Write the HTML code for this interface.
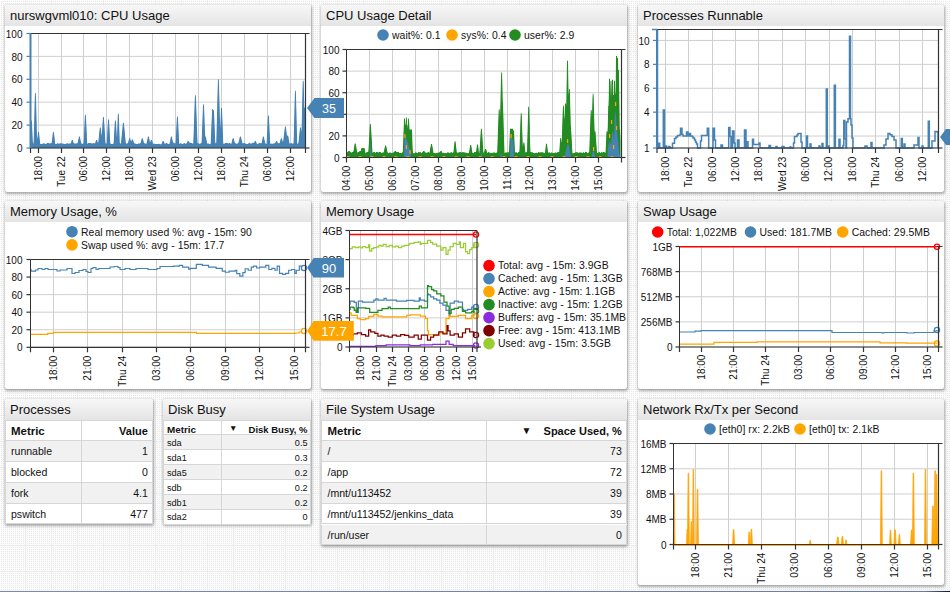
<!DOCTYPE html><html><head><meta charset="utf-8"><style>
*{margin:0;padding:0;box-sizing:border-box}
html,body{width:950px;height:592px;overflow:hidden}
body{font-family:"Liberation Sans",sans-serif;position:relative;background-color:#fbfbfb;
background-image:linear-gradient(90deg,#ececec 1px,transparent 1px),linear-gradient(#ececec 1px,transparent 1px),linear-gradient(90deg,transparent 1px,#fcfcfc 1px),linear-gradient(#e8e8e8 1px,transparent 1px);
background-size:26px 26px,26px 26px,2px 2px,2px 2px;background-position:25px 0,0 25px,1px 1px,1px 1px}
.panel{position:absolute;background:#fff;border-radius:2px;overflow:hidden;box-shadow:0 0 1.5px rgba(0,0,0,0.2),0.5px 1.5px 3px rgba(0,0,0,0.3)}
.hdr{height:21px;background:linear-gradient(#f7f7f7,#e4e4e4);font-size:13px;line-height:20px;padding-left:5px;padding-top:1px;color:#111;white-space:nowrap}
svg{position:absolute;overflow:visible}
svg text{font-family:"Liberation Sans",sans-serif}
.bot{position:absolute;left:0;top:590px;width:950px;height:2px;background:linear-gradient(#f4f4f4 1px,transparent 1px),linear-gradient(90deg,#7a8ea8 0,#6b7f9c 925px,#0b1522 950px)}
table{border-collapse:collapse;position:absolute;font-size:11px;color:#111}
td,th{border:1px solid #d4d4d4;white-space:nowrap}
</style></head><body>
<div class="panel" style="left:5px;top:5px;width:306px;height:187px"><div class="hdr">nurswgvml010: CPU Usage</div></div>
<div class="panel" style="left:321px;top:5px;width:306px;height:187px"><div class="hdr">CPU Usage Detail</div></div>
<div class="panel" style="left:638px;top:5px;width:306px;height:187px"><div class="hdr">Processes Runnable</div></div>
<div class="panel" style="left:5px;top:201px;width:306px;height:188px"><div class="hdr">Memory Usage, %</div></div>
<div class="panel" style="left:321px;top:201px;width:306px;height:188px"><div class="hdr">Memory Usage</div></div>
<div class="panel" style="left:638px;top:201px;width:306px;height:188px"><div class="hdr">Swap Usage</div></div>
<div class="panel" style="left:5px;top:399px;width:148px;height:125px"><div class="hdr">Processes</div></div>
<div class="panel" style="left:163px;top:399px;width:148px;height:125px"><div class="hdr">Disk Busy</div></div>
<div class="panel" style="left:321px;top:399px;width:306px;height:146px"><div class="hdr">File System Usage</div></div>
<div class="panel" style="left:638px;top:399px;width:306px;height:186px"><div class="hdr">Network Rx/Tx per Second</div></div>
<svg style="left:5px;top:25px" width="306" height="167" viewBox="5 25 306 167"><line x1="30.5" y1="148.0" x2="305.5" y2="148.0" stroke="#cfcfcf" stroke-width="1"/><line x1="30.5" y1="125.1" x2="305.5" y2="125.1" stroke="#cfcfcf" stroke-width="1"/><line x1="30.5" y1="102.2" x2="305.5" y2="102.2" stroke="#cfcfcf" stroke-width="1"/><line x1="30.5" y1="79.3" x2="305.5" y2="79.3" stroke="#cfcfcf" stroke-width="1"/><line x1="30.5" y1="56.400000000000006" x2="305.5" y2="56.400000000000006" stroke="#cfcfcf" stroke-width="1"/><line x1="30.5" y1="33.5" x2="305.5" y2="33.5" stroke="#cfcfcf" stroke-width="1"/><line x1="38.5" y1="33.5" x2="38.5" y2="148" stroke="#cfcfcf" stroke-width="1"/><line x1="61.5" y1="33.5" x2="61.5" y2="148" stroke="#cfcfcf" stroke-width="1"/><line x1="83.5" y1="33.5" x2="83.5" y2="148" stroke="#cfcfcf" stroke-width="1"/><line x1="106.5" y1="33.5" x2="106.5" y2="148" stroke="#cfcfcf" stroke-width="1"/><line x1="129.5" y1="33.5" x2="129.5" y2="148" stroke="#cfcfcf" stroke-width="1"/><line x1="152.5" y1="33.5" x2="152.5" y2="148" stroke="#cfcfcf" stroke-width="1"/><line x1="175.5" y1="33.5" x2="175.5" y2="148" stroke="#cfcfcf" stroke-width="1"/><line x1="198.5" y1="33.5" x2="198.5" y2="148" stroke="#cfcfcf" stroke-width="1"/><line x1="221.5" y1="33.5" x2="221.5" y2="148" stroke="#cfcfcf" stroke-width="1"/><line x1="244.5" y1="33.5" x2="244.5" y2="148" stroke="#cfcfcf" stroke-width="1"/><line x1="267.5" y1="33.5" x2="267.5" y2="148" stroke="#cfcfcf" stroke-width="1"/><line x1="290.5" y1="33.5" x2="290.5" y2="148" stroke="#cfcfcf" stroke-width="1"/><path d="M30.5,148 L30.5,33.5 L31.0,120.5 L31.2,120.5 L31.5,120.5 L31.8,120.5 L32.0,122.9 L32.2,128.7 L32.5,134.5 L32.8,140.4 L33.0,143.2 L33.2,143.4 L33.5,143.6 L33.8,137.6 L34.0,127.9 L34.2,118.2 L34.5,108.5 L34.8,98.9 L35.0,93.0 L35.2,93.0 L35.5,93.0 L35.8,93.0 L36.0,96.9 L36.2,106.6 L36.5,116.3 L36.8,126.0 L37.0,135.7 L37.2,139.3 L37.5,136.9 L37.8,134.4 L38.0,132.0 L38.2,132.0 L38.5,132.0 L38.8,132.0 L39.0,132.0 L39.2,134.4 L39.5,136.9 L39.8,139.3 L40.0,141.8 L40.2,143.7 L40.5,143.8 L40.8,144.0 L41.0,144.1 L41.2,144.1 L41.5,144.1 L41.8,144.1 L42.0,144.1 L42.2,143.9 L42.5,143.8 L42.8,143.7 L43.0,143.5 L43.2,143.4 L43.5,143.2 L43.8,143.1 L44.0,142.9 L44.2,143.2 L44.5,143.5 L44.8,143.7 L45.0,144.0 L45.2,144.0 L45.5,143.9 L45.8,143.9 L46.0,143.9 L46.2,143.7 L46.5,143.5 L46.8,143.4 L47.0,143.2 L47.2,143.1 L47.5,143.0 L47.8,142.8 L48.0,142.7 L48.2,142.9 L48.5,143.0 L48.8,143.1 L49.0,143.3 L49.2,143.4 L49.5,143.4 L49.8,143.5 L50.0,143.6 L50.2,143.4 L50.5,143.1 L50.8,142.9 L51.0,142.7 L51.2,143.0 L51.5,143.4 L51.8,142.1 L52.0,139.9 L52.2,137.7 L52.5,135.5 L52.8,133.3 L53.0,132.0 L53.2,132.0 L53.5,132.0 L53.8,132.0 L54.0,132.9 L54.2,135.1 L54.5,137.3 L54.8,139.5 L55.0,141.7 L55.2,144.0 L55.5,144.0 L55.8,144.0 L56.0,144.0 L56.2,144.0 L56.5,143.9 L56.8,143.8 L57.0,143.7 L57.2,143.5 L57.5,143.3 L57.8,143.1 L58.0,142.9 L58.2,143.2 L58.5,143.4 L58.8,143.7 L59.0,143.9 L59.2,143.8 L59.5,143.6 L59.8,143.4 L60.0,143.3 L60.2,143.3 L60.5,143.2 L60.8,143.2 L61.0,143.2 L61.2,143.3 L61.5,143.4 L61.8,143.5 L62.0,143.6 L62.2,143.6 L62.5,143.5 L62.8,143.4 L63.0,143.3 L63.2,143.5 L63.5,143.7 L63.8,143.9 L64.0,144.1 L64.2,144.1 L64.5,144.1 L64.8,144.1 L65.0,144.1 L65.2,144.1 L65.5,144.0 L65.8,144.0 L66.0,143.9 L66.2,143.7 L66.5,143.5 L66.8,143.3 L67.0,143.1 L67.2,143.2 L67.5,143.3 L67.8,143.4 L68.0,143.5 L68.2,143.6 L68.5,143.6 L68.8,143.7 L69.0,143.7 L69.2,143.6 L69.5,143.5 L69.8,143.4 L70.0,143.3 L70.2,143.3 L70.5,143.4 L70.8,143.4 L71.0,142.8 L71.2,141.9 L71.5,141.0 L71.8,140.2 L72.0,140.0 L72.2,140.0 L72.5,140.0 L72.8,140.0 L73.0,140.7 L73.2,141.6 L73.5,142.4 L73.8,143.1 L74.0,143.1 L74.2,143.3 L74.5,143.5 L74.8,143.6 L75.0,143.8 L75.2,143.7 L75.5,143.6 L75.8,143.4 L76.0,143.3 L76.2,143.3 L76.5,143.3 L76.8,143.4 L77.0,143.4 L77.2,143.2 L77.5,143.1 L77.8,142.6 L78.0,141.3 L78.2,140.0 L78.5,138.7 L78.8,137.3 L79.0,136.6 L79.2,136.6 L79.5,136.6 L79.8,136.6 L80.0,137.1 L80.2,138.4 L80.5,139.7 L80.8,141.0 L81.0,142.4 L81.2,143.0 L81.5,143.3 L81.8,143.7 L82.0,144.0 L82.2,143.9 L82.5,143.8 L82.8,143.7 L83.0,143.6 L83.2,143.4 L83.5,143.3 L83.8,140.1 L84.0,134.6 L84.2,129.1 L84.5,123.6 L84.8,118.1 L85.0,114.8 L85.2,114.8 L85.5,114.8 L85.8,114.8 L86.0,117.0 L86.2,122.5 L86.5,128.0 L86.8,133.5 L87.0,139.0 L87.2,143.9 L87.5,143.7 L87.8,143.4 L88.0,143.2 L88.2,143.1 L88.5,143.1 L88.8,143.0 L89.0,143.0 L89.2,143.1 L89.5,143.1 L89.8,143.2 L90.0,143.3 L90.2,143.2 L90.5,143.1 L90.8,142.9 L91.0,142.8 L91.2,143.0 L91.5,143.3 L91.8,143.5 L92.0,143.7 L92.2,143.6 L92.5,143.4 L92.8,143.3 L93.0,143.1 L93.2,143.1 L93.5,143.2 L93.8,143.2 L94.0,143.3 L94.2,143.3 L94.5,143.3 L94.8,143.3 L95.0,143.3 L95.2,143.0 L95.5,142.1 L95.8,141.2 L96.0,140.3 L96.2,140.0 L96.5,140.0 L96.8,140.0 L97.0,140.0 L97.2,140.5 L97.5,141.4 L97.8,142.3 L98.0,142.7 L98.2,142.7 L98.5,140.3 L98.8,137.8 L99.0,135.3 L99.2,132.8 L99.5,130.4 L99.8,127.9 L100.0,127.4 L100.2,127.4 L100.5,127.4 L100.8,127.4 L101.0,129.4 L101.2,131.8 L101.5,134.3 L101.8,135.8 L102.0,131.7 L102.2,127.7 L102.5,123.6 L102.8,119.5 L103.0,117.1 L103.2,117.1 L103.5,117.1 L103.8,117.1 L104.0,118.7 L104.2,122.8 L104.5,126.8 L104.8,130.9 L105.0,135.0 L105.2,139.0 L105.5,143.1 L105.8,143.5 L106.0,143.8 L106.2,143.7 L106.5,143.7 L106.8,142.5 L107.0,137.9 L107.2,133.2 L107.5,128.6 L107.8,124.0 L108.0,119.4 L108.2,119.4 L108.5,119.4 L108.8,119.4 L109.0,119.4 L109.2,124.0 L109.5,128.6 L109.8,133.2 L110.0,137.9 L110.2,142.5 L110.5,143.7 L110.8,143.8 L111.0,144.0 L111.2,144.0 L111.5,144.0 L111.8,144.0 L112.0,144.0 L112.2,144.1 L112.5,144.1 L112.8,144.1 L113.0,144.1 L113.2,143.8 L113.5,143.6 L113.8,140.8 L114.0,136.4 L114.2,132.0 L114.5,127.6 L114.8,123.2 L115.0,120.5 L115.2,120.5 L115.5,120.5 L115.8,120.5 L116.0,122.3 L116.2,126.7 L116.5,131.1 L116.8,135.5 L117.0,138.0 L117.2,130.4 L117.5,122.8 L117.8,115.2 L118.0,113.7 L118.2,113.7 L118.5,113.7 L118.8,113.7 L119.0,119.7 L119.2,127.3 L119.5,134.9 L119.8,142.5 L120.0,143.5 L120.2,143.5 L120.5,143.4 L120.8,143.4 L121.0,142.9 L121.2,140.2 L121.5,137.6 L121.8,135.0 L122.0,132.3 L122.2,129.7 L122.5,127.0 L122.8,124.4 L123.0,122.8 L123.2,122.8 L123.5,122.8 L123.8,122.8 L124.0,123.9 L124.2,126.5 L124.5,129.2 L124.8,131.8 L125.0,134.4 L125.2,137.1 L125.5,139.7 L125.8,142.4 L126.0,143.6 L126.2,143.6 L126.5,143.6 L126.8,143.6 L127.0,143.6 L127.2,143.4 L127.5,143.2 L127.8,143.0 L128.0,142.8 L128.2,142.0 L128.5,141.0 L128.8,140.1 L129.0,139.1 L129.2,138.3 L129.5,138.3 L129.8,138.3 L130.0,138.3 L130.2,138.5 L130.5,139.5 L130.8,140.4 L131.0,141.4 L131.2,141.4 L131.5,140.6 L131.8,139.9 L132.0,139.4 L132.2,139.4 L132.5,139.4 L132.8,139.4 L133.0,139.7 L133.2,140.5 L133.5,141.3 L133.8,142.0 L134.0,142.8 L134.2,143.4 L134.5,143.4 L134.8,143.3 L135.0,143.3 L135.2,143.4 L135.5,143.5 L135.8,143.7 L136.0,143.8 L136.2,143.9 L136.5,144.0 L136.8,144.1 L137.0,144.2 L137.2,144.0 L137.5,143.9 L137.8,143.7 L138.0,143.5 L138.2,143.6 L138.5,143.6 L138.8,143.6 L139.0,143.6 L139.2,143.6 L139.5,143.5 L139.8,143.4 L140.0,143.3 L140.2,143.2 L140.5,143.0 L140.8,142.4 L141.0,141.4 L141.2,140.4 L141.5,139.5 L141.8,138.5 L142.0,138.3 L142.2,138.3 L142.5,138.3 L142.8,138.3 L143.0,139.1 L143.2,140.1 L143.5,141.0 L143.8,142.0 L144.0,143.0 L144.2,143.2 L144.5,143.2 L144.8,143.2 L145.0,143.1 L145.2,143.4 L145.5,143.6 L145.8,143.9 L146.0,144.1 L146.2,143.8 L146.5,143.5 L146.8,142.6 L147.0,141.3 L147.2,140.0 L147.5,138.7 L147.8,137.3 L148.0,136.6 L148.2,136.6 L148.5,136.6 L148.8,136.6 L149.0,137.1 L149.2,138.4 L149.5,139.7 L149.8,141.0 L150.0,142.4 L150.2,142.3 L150.5,141.4 L150.8,140.5 L151.0,140.0 L151.2,140.0 L151.5,140.0 L151.8,140.0 L152.0,140.3 L152.2,141.2 L152.5,142.1 L152.8,143.0 L153.0,144.1 L153.2,143.8 L153.5,143.6 L153.8,143.4 L154.0,143.2 L154.2,143.4 L154.5,143.7 L154.8,143.9 L155.0,144.1 L155.2,144.1 L155.5,144.1 L155.8,144.1 L156.0,144.1 L156.2,144.1 L156.5,144.0 L156.8,143.9 L157.0,143.9 L157.2,143.9 L157.5,143.9 L157.8,143.9 L158.0,144.0 L158.2,143.9 L158.5,143.8 L158.8,143.7 L159.0,143.7 L159.2,143.8 L159.5,143.9 L159.8,144.0 L160.0,144.1 L160.2,144.2 L160.5,144.2 L160.8,144.2 L161.0,144.2 L161.2,144.2 L161.5,144.1 L161.8,143.3 L162.0,142.8 L162.2,142.2 L162.5,141.6 L162.8,141.1 L163.0,141.1 L163.2,141.1 L163.5,141.1 L163.8,141.2 L164.0,141.8 L164.2,142.4 L164.5,143.0 L164.8,144.0 L165.0,144.2 L165.2,143.8 L165.5,143.5 L165.8,143.2 L166.0,142.8 L166.2,142.9 L166.5,143.0 L166.8,143.1 L167.0,143.2 L167.2,143.4 L167.5,143.6 L167.8,143.8 L168.0,144.0 L168.2,143.9 L168.5,143.9 L168.8,143.9 L169.0,143.8 L169.2,143.8 L169.5,143.7 L169.8,142.6 L170.0,141.3 L170.2,140.0 L170.5,138.7 L170.8,137.3 L171.0,136.6 L171.2,136.6 L171.5,136.6 L171.8,136.6 L172.0,137.1 L172.2,138.4 L172.5,139.7 L172.8,141.0 L173.0,142.4 L173.2,142.8 L173.5,142.7 L173.8,142.7 L174.0,142.6 L174.2,142.8 L174.5,143.1 L174.8,143.3 L175.0,143.5 L175.2,143.5 L175.5,143.5 L175.8,140.3 L176.0,135.1 L176.2,130.0 L176.5,124.8 L176.8,119.6 L177.0,116.5 L177.2,116.5 L177.5,116.5 L177.8,116.5 L178.0,118.6 L178.2,123.8 L178.5,128.9 L178.8,134.1 L179.0,139.3 L179.2,143.7 L179.5,143.7 L179.8,143.8 L180.0,143.8 L180.2,143.6 L180.5,143.3 L180.8,143.1 L181.0,142.9 L181.2,143.2 L181.5,143.4 L181.8,143.7 L182.0,144.0 L182.2,144.0 L182.5,144.1 L182.8,144.1 L183.0,144.2 L183.2,143.8 L183.5,143.4 L183.8,143.1 L184.0,142.7 L184.2,142.9 L184.5,143.0 L184.8,143.2 L185.0,143.4 L185.2,143.5 L185.5,143.7 L185.8,143.8 L186.0,144.0 L186.2,143.8 L186.5,143.2 L186.8,142.8 L187.0,142.4 L187.2,141.9 L187.5,141.5 L187.8,141.1 L188.0,141.1 L188.2,141.1 L188.5,141.1 L188.8,141.2 L189.0,141.7 L189.2,142.1 L189.5,142.5 L189.8,142.8 L190.0,142.7 L190.2,142.7 L190.5,142.7 L190.8,142.8 L191.0,142.8 L191.2,142.9 L191.5,143.0 L191.8,143.0 L192.0,143.1 L192.2,143.3 L192.5,143.5 L192.8,143.6 L193.0,143.8 L193.2,143.8 L193.5,136.9 L193.8,129.5 L194.0,122.0 L194.2,114.6 L194.5,107.2 L194.8,99.8 L195.0,95.3 L195.2,95.3 L195.5,95.3 L195.8,95.3 L196.0,98.3 L196.2,105.7 L196.5,113.1 L196.8,120.6 L197.0,128.0 L197.2,135.4 L197.5,142.8 L197.8,143.1 L198.0,143.0 L198.2,143.2 L198.5,143.3 L198.8,143.5 L199.0,143.7 L199.2,143.7 L199.5,143.8 L199.8,143.8 L200.0,143.9 L200.2,143.6 L200.5,143.4 L200.8,143.2 L201.0,142.9 L201.2,142.9 L201.5,142.8 L201.8,138.5 L202.0,131.7 L202.2,124.9 L202.5,118.1 L202.8,111.3 L203.0,104.5 L203.2,104.5 L203.5,104.5 L203.8,104.5 L204.0,104.5 L204.2,111.3 L204.5,118.1 L204.8,124.9 L205.0,131.7 L205.2,136.6 L205.5,136.6 L205.8,136.6 L206.0,137.1 L206.2,138.4 L206.5,139.7 L206.8,141.0 L207.0,142.4 L207.2,143.7 L207.5,143.6 L207.8,143.5 L208.0,143.4 L208.2,143.5 L208.5,143.5 L208.8,143.6 L209.0,143.7 L209.2,143.8 L209.5,143.9 L209.8,144.0 L210.0,144.2 L210.2,144.2 L210.5,144.2 L210.8,141.5 L211.0,135.5 L211.2,129.5 L211.5,123.5 L211.8,117.5 L212.0,111.5 L212.2,109.1 L212.5,109.1 L212.8,109.1 L213.0,109.1 L213.2,110.2 L213.5,110.2 L213.8,110.2 L214.0,110.2 L214.2,116.6 L214.5,123.0 L214.8,129.4 L215.0,135.8 L215.2,142.1 L215.5,143.1 L215.8,143.3 L216.0,143.5 L216.2,143.3 L216.5,134.7 L216.8,124.8 L217.0,114.9 L217.2,105.0 L217.5,95.1 L217.8,85.2 L218.0,79.3 L218.2,79.3 L218.5,79.3 L218.8,79.3 L219.0,83.3 L219.2,93.2 L219.5,103.0 L219.8,112.9 L220.0,122.8 L220.2,128.4 L220.5,121.6 L220.8,114.8 L221.0,107.9 L221.2,107.9 L221.5,107.9 L221.8,107.9 L222.0,107.9 L222.2,114.8 L222.5,121.6 L222.8,128.4 L223.0,135.2 L223.2,142.1 L223.5,143.9 L223.8,143.9 L224.0,143.9 L224.2,143.7 L224.5,143.6 L224.8,143.4 L225.0,143.2 L225.2,143.1 L225.5,143.0 L225.8,142.9 L226.0,142.8 L226.2,142.8 L226.5,142.8 L226.8,142.9 L227.0,142.9 L227.2,143.0 L227.5,143.2 L227.8,143.3 L228.0,143.5 L228.2,143.4 L228.5,143.3 L228.8,143.2 L229.0,143.2 L229.2,143.1 L229.5,143.1 L229.8,143.0 L230.0,142.9 L230.2,143.2 L230.5,143.5 L230.8,143.8 L231.0,144.1 L231.2,143.9 L231.5,143.0 L231.8,142.0 L232.0,141.0 L232.2,140.1 L232.5,139.1 L232.8,138.3 L233.0,138.3 L233.2,138.3 L233.5,138.3 L233.8,138.5 L234.0,139.5 L234.2,140.4 L234.5,141.4 L234.8,142.4 L235.0,143.0 L235.2,143.1 L235.5,143.2 L235.8,143.3 L236.0,143.5 L236.2,143.6 L236.5,143.7 L236.8,143.8 L237.0,143.9 L237.2,143.7 L237.5,143.4 L237.8,143.2 L238.0,143.0 L238.2,143.1 L238.5,142.5 L238.8,141.4 L239.0,140.4 L239.2,139.3 L239.5,138.2 L239.8,137.2 L240.0,136.6 L240.2,136.6 L240.5,136.6 L240.8,136.6 L241.0,137.0 L241.2,138.0 L241.5,139.1 L241.8,140.2 L242.0,141.2 L242.2,142.3 L242.5,143.3 L242.8,143.6 L243.0,143.6 L243.2,143.4 L243.5,143.1 L243.8,142.9 L244.0,142.7 L244.2,142.8 L244.5,142.9 L244.8,143.0 L245.0,143.1 L245.2,143.3 L245.5,143.5 L245.8,143.7 L246.0,143.9 L246.2,144.0 L246.5,144.0 L246.8,144.0 L247.0,144.0 L247.2,144.0 L247.5,144.0 L247.8,144.0 L248.0,144.0 L248.2,143.7 L248.5,143.4 L248.8,143.1 L249.0,142.8 L249.2,142.8 L249.5,142.8 L249.8,142.9 L250.0,142.9 L250.2,143.2 L250.5,143.5 L250.8,143.7 L251.0,144.0 L251.2,143.7 L251.5,143.4 L251.8,143.2 L252.0,142.9 L252.2,142.8 L252.5,142.8 L252.8,142.7 L253.0,142.7 L253.2,142.8 L253.5,142.9 L253.8,143.0 L254.0,143.0 L254.2,142.4 L254.5,141.8 L254.8,141.2 L255.0,141.1 L255.2,141.1 L255.5,141.1 L255.8,141.1 L256.0,141.6 L256.2,142.2 L256.5,142.8 L256.8,143.3 L257.0,144.0 L257.2,144.1 L257.5,144.1 L257.8,144.2 L258.0,144.2 L258.2,143.8 L258.5,143.4 L258.8,143.0 L259.0,142.7 L259.2,142.8 L259.5,142.9 L259.8,143.1 L260.0,143.2 L260.2,143.2 L260.5,143.3 L260.8,143.3 L261.0,143.4 L261.2,143.2 L261.5,143.1 L261.8,142.6 L262.0,141.3 L262.2,140.0 L262.5,138.7 L262.8,137.3 L263.0,136.6 L263.2,136.6 L263.5,136.6 L263.8,136.6 L264.0,137.1 L264.2,138.4 L264.5,139.7 L264.8,141.0 L265.0,142.4 L265.2,143.1 L265.5,143.4 L265.8,143.6 L266.0,143.9 L266.2,143.9 L266.5,143.9 L266.8,140.2 L267.0,134.8 L267.2,129.4 L267.5,124.0 L267.8,118.6 L268.0,115.4 L268.2,115.4 L268.5,115.4 L268.8,115.4 L269.0,117.5 L269.2,122.9 L269.5,128.3 L269.8,133.7 L270.0,139.1 L270.2,143.4 L270.5,143.5 L270.8,143.7 L271.0,143.8 L271.2,143.7 L271.5,143.7 L271.8,143.6 L272.0,143.5 L272.2,143.7 L272.5,143.8 L272.8,143.9 L273.0,144.0 L273.2,143.7 L273.5,143.4 L273.8,143.1 L274.0,142.8 L274.2,143.0 L274.5,143.2 L274.8,143.4 L275.0,143.7 L275.2,142.9 L275.5,142.3 L275.8,141.7 L276.0,141.1 L276.2,141.1 L276.5,141.1 L276.8,141.1 L277.0,141.1 L277.2,141.7 L277.5,142.3 L277.8,142.9 L278.0,142.8 L278.2,143.0 L278.5,143.2 L278.8,143.4 L279.0,143.5 L279.2,143.3 L279.5,143.1 L279.8,142.8 L280.0,141.8 L280.2,140.8 L280.5,139.9 L280.8,138.9 L281.0,138.3 L281.2,138.3 L281.5,138.3 L281.8,138.3 L282.0,138.7 L282.2,139.7 L282.5,140.6 L282.8,141.6 L283.0,142.6 L283.2,140.8 L283.5,138.7 L283.8,136.5 L284.0,134.4 L284.2,132.2 L284.5,130.0 L284.8,127.9 L285.0,126.6 L285.2,126.6 L285.5,126.6 L285.8,126.6 L286.0,127.5 L286.2,129.6 L286.5,131.8 L286.8,133.9 L287.0,136.1 L287.2,135.4 L287.5,135.4 L287.8,135.4 L288.0,135.4 L288.2,135.7 L288.5,137.3 L288.8,138.8 L289.0,140.3 L289.2,141.9 L289.5,143.7 L289.8,143.6 L290.0,143.5 L290.2,143.4 L290.5,143.3 L290.8,143.2 L291.0,143.1 L291.2,143.1 L291.5,143.2 L291.8,143.3 L292.0,143.3 L292.2,143.4 L292.5,143.5 L292.8,143.6 L293.0,143.7 L293.2,143.6 L293.5,143.5 L293.8,137.3 L294.0,127.2 L294.2,117.1 L294.5,107.0 L294.8,96.8 L295.0,90.8 L295.2,90.8 L295.5,90.8 L295.8,90.8 L296.0,94.8 L296.2,104.9 L296.5,115.1 L296.8,125.2 L297.0,135.3 L297.2,143.9 L297.5,143.7 L297.8,143.5 L298.0,143.3 L298.2,143.4 L298.5,142.2 L298.8,139.8 L299.0,137.3 L299.2,134.8 L299.5,132.3 L299.8,129.9 L300.0,127.4 L300.2,127.4 L300.5,127.4 L300.8,127.4 L301.0,127.4 L301.2,129.9 L301.5,132.3 L301.8,122.4 L302.0,111.4 L302.2,100.5 L302.5,89.5 L302.8,80.8 L303.0,80.8 L303.2,80.8 L303.5,80.8 L303.8,83.0 L304.0,93.9 L304.2,104.9 L304.5,107.9 L304.8,107.9 L305.0,107.9 L305.2,107.9 L305.5,107.9 L305.5,148 Z" fill="#4682b4"/><line x1="30.5" y1="33.5" x2="309.5" y2="33.5" stroke="#333333" stroke-width="1.2"/><line x1="305.5" y1="33.5" x2="305.5" y2="148" stroke="#333333" stroke-width="1.2"/><line x1="305.5" y1="148" x2="309.5" y2="148" stroke="#333333" stroke-width="1.2"/><line x1="30.5" y1="148" x2="305.5" y2="148" stroke="#333333" stroke-width="1.2"/><line x1="30.5" y1="33.5" x2="30.5" y2="148" stroke="#4682b4" stroke-width="2"/><line x1="26.5" y1="148.0" x2="30.5" y2="148.0" stroke="#4682b4" stroke-width="1.2"/><text x="22.5" y="152.1" font-size="10" text-anchor="end" fill="#111">0</text><line x1="26.5" y1="125.1" x2="30.5" y2="125.1" stroke="#4682b4" stroke-width="1.2"/><text x="22.5" y="129.2" font-size="10" text-anchor="end" fill="#111">20</text><line x1="26.5" y1="102.2" x2="30.5" y2="102.2" stroke="#4682b4" stroke-width="1.2"/><text x="22.5" y="106.3" font-size="10" text-anchor="end" fill="#111">40</text><line x1="26.5" y1="79.3" x2="30.5" y2="79.3" stroke="#4682b4" stroke-width="1.2"/><text x="22.5" y="83.39999999999999" font-size="10" text-anchor="end" fill="#111">60</text><line x1="26.5" y1="56.400000000000006" x2="30.5" y2="56.400000000000006" stroke="#4682b4" stroke-width="1.2"/><text x="22.5" y="60.50000000000001" font-size="10" text-anchor="end" fill="#111">80</text><line x1="26.5" y1="33.5" x2="30.5" y2="33.5" stroke="#4682b4" stroke-width="1.2"/><text x="22.5" y="37.6" font-size="10" text-anchor="end" fill="#111">100</text><line x1="30.5" y1="148" x2="30.5" y2="153" stroke="#333333" stroke-width="1.2"/><line x1="38.5" y1="148" x2="38.5" y2="153" stroke="#333333" stroke-width="1.2"/><line x1="61.5" y1="148" x2="61.5" y2="153" stroke="#333333" stroke-width="1.2"/><line x1="83.5" y1="148" x2="83.5" y2="153" stroke="#333333" stroke-width="1.2"/><line x1="106.5" y1="148" x2="106.5" y2="153" stroke="#333333" stroke-width="1.2"/><line x1="129.5" y1="148" x2="129.5" y2="153" stroke="#333333" stroke-width="1.2"/><line x1="152.5" y1="148" x2="152.5" y2="153" stroke="#333333" stroke-width="1.2"/><line x1="175.5" y1="148" x2="175.5" y2="153" stroke="#333333" stroke-width="1.2"/><line x1="198.5" y1="148" x2="198.5" y2="153" stroke="#333333" stroke-width="1.2"/><line x1="221.5" y1="148" x2="221.5" y2="153" stroke="#333333" stroke-width="1.2"/><line x1="244.5" y1="148" x2="244.5" y2="153" stroke="#333333" stroke-width="1.2"/><line x1="267.5" y1="148" x2="267.5" y2="153" stroke="#333333" stroke-width="1.2"/><line x1="290.5" y1="148" x2="290.5" y2="153" stroke="#333333" stroke-width="1.2"/><line x1="305.5" y1="148" x2="305.5" y2="153" stroke="#333333" stroke-width="1.2"/><text transform="translate(41.9,156.1) rotate(-90)" font-size="10" text-anchor="end" fill="#111">18:00</text><text transform="translate(64.9,156.1) rotate(-90)" font-size="10" text-anchor="end" fill="#111">Tue 22</text><text transform="translate(86.9,156.1) rotate(-90)" font-size="10" text-anchor="end" fill="#111">06:00</text><text transform="translate(109.9,156.1) rotate(-90)" font-size="10" text-anchor="end" fill="#111">12:00</text><text transform="translate(132.9,156.1) rotate(-90)" font-size="10" text-anchor="end" fill="#111">18:00</text><text transform="translate(155.9,156.1) rotate(-90)" font-size="10" text-anchor="end" fill="#111">Wed 23</text><text transform="translate(178.9,156.1) rotate(-90)" font-size="10" text-anchor="end" fill="#111">06:00</text><text transform="translate(201.9,156.1) rotate(-90)" font-size="10" text-anchor="end" fill="#111">12:00</text><text transform="translate(224.9,156.1) rotate(-90)" font-size="10" text-anchor="end" fill="#111">18:00</text><text transform="translate(247.9,156.1) rotate(-90)" font-size="10" text-anchor="end" fill="#111">Thu 24</text><text transform="translate(270.9,156.1) rotate(-90)" font-size="10" text-anchor="end" fill="#111">06:00</text><text transform="translate(293.9,156.1) rotate(-90)" font-size="10" text-anchor="end" fill="#111">12:00</text></svg>
<svg style="left:321px;top:25px" width="306" height="167" viewBox="321 25 306 167"><circle cx="383" cy="35" r="5.8" fill="#4682b4"/><text x="392" y="38.8" font-size="10.4" fill="#111" letter-spacing="0.07">wait%: 0.1</text><circle cx="452" cy="35" r="5.8" fill="#ffa500"/><text x="461" y="38.8" font-size="10.4" fill="#111" letter-spacing="0.07">sys%: 0.4</text><circle cx="515" cy="35" r="5.8" fill="#228b22"/><text x="524" y="38.8" font-size="10.4" fill="#111" letter-spacing="0.07">user%: 2.9</text><line x1="346.5" y1="157.5" x2="621.5" y2="157.5" stroke="#cfcfcf" stroke-width="1"/><line x1="346.5" y1="135.9" x2="621.5" y2="135.9" stroke="#cfcfcf" stroke-width="1"/><line x1="346.5" y1="114.3" x2="621.5" y2="114.3" stroke="#cfcfcf" stroke-width="1"/><line x1="346.5" y1="92.7" x2="621.5" y2="92.7" stroke="#cfcfcf" stroke-width="1"/><line x1="346.5" y1="71.1" x2="621.5" y2="71.1" stroke="#cfcfcf" stroke-width="1"/><line x1="346.5" y1="49.5" x2="621.5" y2="49.5" stroke="#cfcfcf" stroke-width="1"/><line x1="369.5" y1="49.5" x2="369.5" y2="157.5" stroke="#cfcfcf" stroke-width="1"/><line x1="392.5" y1="49.5" x2="392.5" y2="157.5" stroke="#cfcfcf" stroke-width="1"/><line x1="415.5" y1="49.5" x2="415.5" y2="157.5" stroke="#cfcfcf" stroke-width="1"/><line x1="438.5" y1="49.5" x2="438.5" y2="157.5" stroke="#cfcfcf" stroke-width="1"/><line x1="461.5" y1="49.5" x2="461.5" y2="157.5" stroke="#cfcfcf" stroke-width="1"/><line x1="484.5" y1="49.5" x2="484.5" y2="157.5" stroke="#cfcfcf" stroke-width="1"/><line x1="507.5" y1="49.5" x2="507.5" y2="157.5" stroke="#cfcfcf" stroke-width="1"/><line x1="529.5" y1="49.5" x2="529.5" y2="157.5" stroke="#cfcfcf" stroke-width="1"/><line x1="552.5" y1="49.5" x2="552.5" y2="157.5" stroke="#cfcfcf" stroke-width="1"/><line x1="575.5" y1="49.5" x2="575.5" y2="157.5" stroke="#cfcfcf" stroke-width="1"/><line x1="598.5" y1="49.5" x2="598.5" y2="157.5" stroke="#cfcfcf" stroke-width="1"/><path d="M346.5,157.5 L346.5,152.5 L346.8,152.5 L347.0,152.5 L347.2,152.3 L347.5,152.0 L347.8,151.8 L348.0,151.5 L348.2,151.3 L348.5,151.0 L348.8,151.0 L349.0,151.0 L349.2,151.0 L349.5,151.0 L349.8,151.3 L350.0,151.5 L350.2,151.8 L350.5,152.0 L350.8,152.3 L351.0,152.5 L351.2,152.5 L351.5,152.6 L351.8,152.4 L352.0,152.2 L352.2,152.0 L352.5,151.9 L352.8,152.0 L353.0,152.0 L353.2,152.1 L353.5,150.7 L353.8,149.2 L354.0,147.7 L354.2,146.2 L354.5,144.7 L354.8,143.5 L355.0,143.5 L355.2,143.5 L355.5,143.5 L355.8,143.8 L356.0,145.3 L356.2,146.8 L356.5,148.3 L356.8,149.8 L357.0,151.3 L357.2,152.6 L357.5,152.4 L357.8,152.3 L358.0,152.2 L358.2,152.0 L358.5,151.9 L358.8,151.9 L359.0,151.7 L359.2,151.5 L359.5,151.2 L359.8,151.0 L360.0,151.0 L360.2,151.0 L360.5,151.0 L360.8,151.1 L361.0,150.3 L361.2,149.2 L361.5,148.1 L361.8,148.1 L362.0,148.1 L362.2,148.1 L362.5,148.1 L362.8,148.1 L363.0,148.1 L363.2,148.1 L363.5,148.1 L363.8,148.1 L364.0,148.1 L364.2,148.1 L364.5,148.1 L364.8,149.2 L365.0,150.3 L365.2,151.4 L365.5,153.2 L365.8,153.0 L366.0,152.7 L366.2,152.5 L366.5,152.3 L366.8,152.2 L367.0,152.2 L367.2,152.1 L367.5,152.1 L367.8,152.1 L368.0,152.0 L368.2,152.0 L368.5,149.0 L368.8,144.5 L369.0,140.1 L369.2,135.6 L369.5,131.1 L369.8,126.7 L370.0,124.0 L370.2,124.0 L370.5,124.0 L370.8,124.0 L371.0,125.8 L371.2,130.3 L371.5,134.7 L371.8,139.2 L372.0,143.6 L372.2,148.1 L372.5,153.1 L372.8,152.8 L373.0,152.5 L373.2,152.2 L373.5,152.0 L373.8,151.9 L374.0,151.9 L374.2,151.9 L374.5,151.8 L374.8,152.1 L375.0,152.4 L375.2,152.7 L375.5,153.0 L375.8,152.4 L376.0,152.3 L376.2,152.1 L376.5,151.8 L376.8,152.1 L377.0,152.1 L377.2,152.1 L377.5,152.1 L377.8,152.2 L378.0,152.3 L378.2,152.4 L378.5,152.6 L378.8,152.4 L379.0,152.2 L379.2,152.0 L379.5,151.8 L379.8,151.9 L380.0,151.9 L380.2,152.0 L380.5,152.0 L380.8,152.3 L381.0,152.5 L381.2,152.8 L381.5,153.0 L381.8,152.9 L382.0,152.8 L382.2,152.7 L382.5,152.6 L382.8,152.6 L383.0,152.6 L383.2,152.5 L383.5,152.5 L383.8,151.8 L384.0,150.7 L384.2,149.5 L384.5,148.4 L384.8,147.2 L385.0,146.1 L385.2,145.6 L385.5,145.6 L385.8,145.6 L386.0,145.6 L386.2,146.3 L386.5,147.5 L386.8,148.6 L387.0,149.8 L387.2,150.9 L387.5,152.1 L387.8,152.5 L388.0,152.7 L388.2,153.0 L388.5,153.3 L388.8,153.1 L389.0,152.9 L389.2,152.7 L389.5,152.5 L389.8,152.5 L390.0,152.5 L390.2,152.6 L390.5,152.6 L390.8,152.8 L391.0,152.9 L391.2,153.1 L391.5,153.3 L391.8,153.1 L392.0,153.0 L392.2,152.9 L392.5,152.8 L392.8,152.7 L393.0,152.6 L393.2,152.5 L393.5,152.3 L393.8,152.4 L394.0,152.2 L394.2,151.9 L394.5,151.5 L394.8,151.1 L395.0,151.0 L395.2,151.0 L395.5,151.0 L395.8,151.0 L396.0,151.3 L396.2,151.7 L396.5,151.8 L396.8,151.9 L397.0,151.9 L397.2,152.0 L397.5,152.1 L397.8,152.0 L398.0,152.0 L398.2,151.9 L398.5,151.8 L398.8,152.1 L399.0,152.5 L399.2,152.8 L399.5,153.1 L399.8,153.1 L400.0,153.0 L400.2,152.9 L400.5,152.9 L400.8,153.0 L401.0,153.1 L401.2,153.1 L401.5,153.2 L401.8,152.9 L402.0,152.7 L402.2,152.4 L402.5,152.1 L402.8,152.3 L403.0,146.9 L403.2,139.8 L403.5,132.8 L403.8,125.7 L404.0,118.6 L404.2,118.6 L404.5,118.6 L404.8,118.6 L405.0,118.6 L405.2,125.1 L405.5,125.1 L405.8,121.9 L406.0,117.5 L406.2,117.5 L406.5,117.5 L406.8,117.5 L407.0,120.5 L407.2,125.1 L407.5,125.1 L407.8,128.5 L408.0,121.4 L408.2,118.6 L408.5,118.6 L408.8,118.6 L409.0,118.6 L409.2,122.9 L409.5,129.4 L409.8,129.4 L410.0,129.4 L410.2,129.4 L410.5,129.4 L410.8,129.4 L411.0,129.4 L411.2,129.4 L411.5,129.4 L411.8,129.4 L412.0,129.4 L412.2,136.6 L412.5,143.9 L412.8,151.1 L413.0,152.7 L413.2,152.9 L413.5,153.2 L413.8,153.2 L414.0,153.2 L414.2,153.2 L414.5,153.2 L414.8,153.0 L415.0,152.7 L415.2,152.5 L415.5,152.2 L415.8,152.3 L416.0,152.4 L416.2,152.5 L416.5,152.6 L416.8,152.8 L417.0,152.9 L417.2,153.0 L417.5,153.2 L417.8,152.9 L418.0,152.5 L418.2,152.2 L418.5,151.9 L418.8,152.0 L419.0,152.1 L419.2,152.2 L419.5,152.3 L419.8,152.3 L420.0,152.2 L420.2,152.1 L420.5,152.1 L420.8,152.3 L421.0,152.6 L421.2,152.9 L421.5,153.2 L421.8,152.9 L422.0,152.6 L422.2,152.3 L422.5,152.0 L422.8,151.9 L423.0,151.5 L423.2,151.1 L423.5,151.0 L423.8,151.0 L424.0,151.0 L424.2,151.0 L424.5,151.3 L424.8,151.7 L425.0,152.1 L425.2,152.4 L425.5,152.6 L425.8,152.6 L426.0,152.7 L426.2,152.7 L426.5,152.8 L426.8,152.7 L427.0,152.6 L427.2,152.5 L427.5,152.5 L427.8,152.3 L428.0,152.2 L428.2,152.0 L428.5,151.9 L428.8,152.1 L429.0,152.4 L429.2,152.6 L429.5,152.9 L429.8,151.1 L430.0,149.7 L430.2,148.3 L430.5,146.9 L430.8,145.5 L431.0,144.1 L431.2,144.1 L431.5,144.1 L431.8,144.1 L432.0,144.1 L432.2,145.5 L432.5,146.9 L432.8,148.3 L433.0,149.7 L433.2,151.1 L433.5,153.1 L433.8,153.1 L434.0,153.1 L434.2,153.1 L434.5,153.0 L434.8,153.1 L435.0,153.1 L435.2,153.2 L435.5,153.2 L435.8,153.2 L436.0,153.1 L436.2,153.0 L436.5,153.0 L436.8,152.9 L437.0,152.9 L437.2,152.9 L437.5,152.8 L437.8,152.8 L438.0,152.8 L438.2,152.8 L438.5,152.8 L438.8,152.7 L439.0,152.5 L439.2,152.3 L439.5,152.1 L439.8,152.2 L440.0,151.8 L440.2,151.4 L440.5,151.0 L440.8,151.0 L441.0,151.0 L441.2,151.0 L441.5,151.0 L441.8,151.4 L442.0,151.8 L442.2,152.2 L442.5,153.0 L442.8,153.0 L443.0,152.9 L443.2,152.8 L443.5,152.8 L443.8,152.9 L444.0,153.0 L444.2,153.1 L444.5,153.3 L444.8,153.2 L445.0,153.1 L445.2,153.0 L445.5,152.9 L445.8,153.0 L446.0,153.1 L446.2,153.2 L446.5,153.3 L446.8,153.0 L447.0,152.7 L447.2,152.5 L447.5,152.2 L447.8,152.2 L448.0,152.3 L448.2,152.4 L448.5,152.5 L448.8,152.6 L449.0,152.7 L449.2,152.9 L449.5,153.0 L449.8,152.9 L450.0,152.8 L450.2,152.7 L450.5,152.6 L450.8,152.4 L451.0,152.2 L451.2,152.0 L451.5,151.9 L451.8,152.2 L452.0,152.5 L452.2,152.8 L452.5,153.1 L452.8,152.9 L453.0,152.6 L453.2,152.3 L453.5,151.6 L453.8,149.3 L454.0,146.9 L454.2,144.6 L454.5,142.2 L454.8,141.3 L455.0,141.3 L455.2,141.3 L455.5,141.3 L455.8,142.7 L456.0,145.0 L456.2,147.4 L456.5,149.7 L456.8,152.1 L457.0,152.4 L457.2,152.5 L457.5,152.7 L457.8,152.7 L458.0,152.6 L458.2,152.6 L458.5,152.5 L458.8,152.5 L459.0,152.4 L459.2,152.3 L459.5,152.2 L459.8,152.1 L460.0,152.0 L460.2,151.9 L460.5,151.8 L460.8,152.0 L461.0,152.3 L461.2,152.5 L461.5,152.8 L461.8,152.6 L462.0,152.4 L462.2,152.2 L462.5,152.0 L462.8,152.1 L463.0,152.1 L463.2,152.2 L463.5,152.2 L463.8,152.2 L464.0,152.3 L464.2,152.3 L464.5,152.3 L464.8,152.4 L465.0,152.5 L465.2,152.6 L465.5,152.7 L465.8,152.7 L466.0,152.7 L466.2,152.7 L466.5,152.8 L466.8,152.9 L467.0,153.0 L467.2,153.1 L467.5,153.2 L467.8,153.2 L468.0,153.1 L468.2,153.1 L468.5,153.1 L468.8,153.1 L469.0,152.5 L469.2,151.0 L469.5,149.4 L469.8,147.9 L470.0,146.3 L470.2,145.1 L470.5,145.1 L470.8,145.1 L471.0,145.1 L471.2,145.4 L471.5,146.9 L471.8,148.5 L472.0,150.0 L472.2,151.6 L472.5,153.0 L472.8,153.1 L473.0,153.1 L473.2,153.1 L473.5,153.2 L473.8,152.9 L474.0,152.6 L474.2,152.3 L474.5,152.0 L474.8,152.0 L475.0,152.0 L475.2,152.0 L475.5,152.0 L475.8,152.0 L476.0,152.1 L476.2,150.5 L476.5,148.5 L476.8,146.5 L477.0,144.5 L477.2,144.5 L477.5,144.5 L477.8,144.5 L478.0,144.5 L478.2,146.5 L478.5,148.5 L478.8,150.5 L479.0,152.9 L479.2,152.9 L479.5,150.9 L479.8,147.0 L480.0,143.0 L480.2,139.0 L480.5,135.0 L480.8,131.1 L481.0,128.7 L481.2,128.7 L481.5,128.7 L481.8,128.7 L482.0,130.3 L482.2,134.2 L482.5,138.2 L482.8,142.2 L483.0,146.2 L483.2,150.1 L483.5,152.9 L483.8,152.6 L484.0,152.4 L484.2,152.0 L484.5,151.1 L484.8,150.1 L485.0,149.2 L485.2,148.9 L485.5,148.9 L485.8,148.9 L486.0,148.9 L486.2,149.4 L486.5,150.3 L486.8,151.2 L487.0,152.2 L487.2,152.8 L487.5,152.9 L487.8,152.6 L488.0,152.4 L488.2,152.1 L488.5,151.8 L488.8,152.1 L489.0,152.3 L489.2,152.6 L489.5,152.8 L489.8,152.8 L490.0,152.8 L490.2,152.8 L490.5,152.7 L490.8,152.9 L491.0,153.0 L491.2,153.2 L491.5,153.3 L491.8,153.1 L492.0,153.0 L492.2,152.9 L492.5,152.7 L492.8,152.7 L493.0,152.6 L493.2,152.6 L493.5,152.6 L493.8,152.6 L494.0,152.5 L494.2,152.5 L494.5,152.5 L494.8,152.6 L495.0,152.8 L495.2,152.9 L495.5,153.0 L495.8,152.9 L496.0,152.8 L496.2,152.6 L496.5,152.5 L496.8,152.7 L497.0,152.9 L497.2,151.1 L497.5,143.9 L497.8,136.7 L498.0,129.4 L498.2,122.2 L498.5,115.0 L498.8,109.2 L499.0,109.2 L499.2,109.2 L499.5,109.2 L499.8,110.7 L500.0,117.9 L500.2,110.3 L500.5,99.2 L500.8,88.1 L501.0,77.0 L501.2,72.5 L501.5,72.5 L501.8,72.5 L502.0,72.5 L502.2,79.2 L502.5,90.3 L502.8,101.4 L503.0,103.5 L503.2,111.7 L503.5,119.8 L503.8,128.0 L504.0,136.2 L504.2,144.4 L504.5,152.9 L504.8,152.8 L505.0,152.7 L505.2,152.5 L505.5,152.4 L505.8,152.4 L506.0,152.4 L506.2,152.5 L506.5,152.5 L506.8,152.4 L507.0,152.3 L507.2,152.2 L507.5,152.2 L507.8,152.2 L508.0,152.2 L508.2,152.3 L508.5,152.3 L508.8,152.3 L509.0,152.2 L509.2,146.6 L509.5,140.6 L509.8,134.6 L510.0,128.7 L510.2,128.7 L510.5,128.7 L510.8,128.7 L511.0,128.7 L511.2,128.7 L511.5,128.7 L511.8,128.7 L512.0,128.7 L512.2,128.7 L512.5,128.7 L512.8,128.7 L513.0,128.7 L513.2,130.5 L513.5,130.5 L513.8,130.5 L514.0,130.5 L514.2,136.0 L514.5,141.5 L514.8,147.0 L515.0,152.6 L515.2,152.4 L515.5,152.2 L515.8,152.2 L516.0,152.3 L516.2,152.3 L516.5,152.3 L516.8,152.5 L517.0,152.8 L517.2,153.0 L517.5,153.2 L517.8,152.9 L518.0,152.6 L518.2,152.3 L518.5,152.0 L518.8,152.0 L519.0,152.0 L519.2,152.0 L519.5,149.5 L519.8,141.9 L520.0,134.4 L520.2,126.8 L520.5,119.3 L520.8,113.2 L521.0,113.2 L521.2,113.2 L521.5,113.2 L521.8,114.7 L522.0,122.3 L522.2,129.9 L522.5,137.4 L522.8,145.0 L523.0,146.4 L523.2,143.9 L523.5,142.4 L523.8,142.4 L524.0,142.4 L524.2,142.4 L524.5,143.4 L524.8,145.9 L525.0,148.5 L525.2,151.0 L525.5,152.5 L525.8,152.4 L526.0,152.3 L526.2,152.2 L526.5,152.0 L526.8,152.0 L527.0,152.0 L527.2,143.0 L527.5,133.5 L527.8,123.9 L528.0,114.4 L528.2,106.7 L528.5,106.7 L528.8,106.7 L529.0,106.7 L529.2,108.6 L529.5,118.2 L529.8,127.7 L530.0,137.3 L530.2,146.8 L530.5,151.9 L530.8,152.0 L531.0,152.1 L531.2,152.2 L531.5,152.3 L531.8,152.3 L532.0,152.2 L532.2,152.2 L532.5,152.2 L532.8,152.4 L533.0,152.6 L533.2,152.8 L533.5,152.9 L533.8,153.0 L534.0,153.1 L534.2,153.2 L534.5,153.2 L534.8,153.2 L535.0,153.2 L535.2,153.1 L535.5,153.1 L535.8,153.0 L536.0,152.9 L536.2,152.8 L536.5,152.7 L536.8,152.8 L537.0,152.9 L537.2,153.0 L537.5,153.1 L537.8,152.9 L538.0,152.6 L538.2,152.3 L538.5,152.0 L538.8,152.1 L539.0,152.2 L539.2,152.3 L539.5,152.4 L539.8,152.4 L540.0,152.4 L540.2,152.4 L540.5,152.3 L540.8,152.3 L541.0,152.3 L541.2,152.3 L541.5,152.3 L541.8,152.3 L542.0,152.3 L542.2,152.3 L542.5,152.3 L542.8,152.3 L543.0,152.4 L543.2,152.5 L543.5,152.5 L543.8,152.7 L544.0,152.9 L544.2,153.1 L544.5,153.3 L544.8,153.0 L545.0,152.7 L545.2,150.3 L545.5,148.2 L545.8,146.0 L546.0,143.8 L546.2,143.8 L546.5,143.8 L546.8,143.8 L547.0,143.8 L547.2,146.0 L547.5,148.2 L547.8,150.3 L548.0,152.5 L548.2,152.5 L548.5,152.5 L548.8,152.4 L549.0,152.4 L549.2,152.3 L549.5,152.3 L549.8,152.5 L550.0,152.7 L550.2,153.0 L550.5,153.2 L550.8,152.9 L551.0,152.7 L551.2,152.4 L551.5,152.2 L551.8,152.4 L552.0,152.5 L552.2,152.7 L552.5,152.9 L552.8,153.0 L553.0,153.0 L553.2,153.1 L553.5,153.2 L553.8,153.1 L554.0,153.0 L554.2,153.0 L554.5,152.9 L554.8,152.7 L555.0,152.5 L555.2,152.4 L555.5,152.2 L555.8,152.4 L556.0,152.6 L556.2,152.8 L556.5,153.0 L556.8,152.8 L557.0,152.6 L557.2,152.4 L557.5,152.2 L557.8,152.1 L558.0,152.0 L558.2,151.9 L558.5,151.8 L558.8,152.0 L559.0,152.2 L559.2,151.8 L559.5,148.2 L559.8,144.6 L560.0,141.0 L560.2,138.1 L560.5,138.1 L560.8,138.1 L561.0,138.1 L561.2,138.8 L561.5,142.4 L561.8,141.6 L562.0,133.8 L562.2,126.0 L562.5,118.2 L562.8,110.3 L563.0,105.7 L563.2,105.7 L563.5,105.7 L563.8,105.7 L564.0,108.8 L564.2,116.6 L564.5,119.8 L564.8,111.7 L565.0,103.5 L565.2,103.5 L565.5,103.5 L565.8,103.5 L566.0,103.5 L566.2,106.6 L566.5,91.3 L566.8,76.0 L567.0,60.7 L567.2,60.7 L567.5,60.7 L567.8,60.7 L568.0,60.7 L568.2,76.0 L568.5,91.3 L568.8,95.3 L569.0,88.9 L569.2,88.9 L569.5,88.9 L569.8,88.9 L570.0,93.2 L570.2,103.8 L570.5,114.4 L570.8,125.0 L571.0,126.9 L571.2,131.5 L571.5,136.1 L571.8,140.6 L572.0,145.2 L572.2,149.8 L572.5,153.3 L572.8,153.3 L573.0,153.2 L573.2,153.2 L573.5,153.2 L573.8,153.1 L574.0,153.0 L574.2,153.0 L574.5,152.9 L574.8,152.7 L575.0,152.6 L575.2,152.4 L575.5,152.3 L575.8,152.3 L576.0,152.3 L576.2,152.2 L576.5,152.2 L576.8,152.2 L577.0,152.3 L577.2,152.3 L577.5,152.3 L577.8,152.4 L578.0,152.6 L578.2,152.7 L578.5,152.8 L578.8,152.8 L579.0,152.7 L579.2,152.6 L579.5,152.5 L579.8,152.5 L580.0,152.5 L580.2,152.6 L580.5,152.6 L580.8,152.6 L581.0,152.6 L581.2,152.6 L581.5,152.6 L581.8,152.7 L582.0,152.8 L582.2,153.0 L582.5,153.1 L582.8,152.8 L583.0,152.5 L583.2,152.2 L583.5,151.9 L583.8,152.2 L584.0,152.5 L584.2,152.7 L584.5,153.0 L584.8,152.7 L585.0,152.4 L585.2,152.1 L585.5,151.8 L585.8,151.8 L586.0,151.8 L586.2,151.9 L586.5,151.9 L586.8,152.2 L587.0,152.6 L587.2,152.9 L587.5,153.3 L587.8,153.1 L588.0,152.9 L588.2,152.8 L588.5,152.6 L588.8,152.5 L589.0,152.3 L589.2,151.1 L589.5,144.0 L589.8,136.9 L590.0,129.8 L590.2,122.7 L590.5,115.7 L590.8,110.0 L591.0,110.0 L591.2,110.0 L591.5,110.0 L591.8,111.4 L592.0,117.3 L592.2,107.5 L592.5,97.7 L592.8,93.8 L593.0,93.8 L593.2,93.8 L593.5,93.8 L593.8,99.7 L594.0,109.4 L594.2,119.2 L594.5,129.0 L594.8,131.6 L595.0,131.6 L595.2,131.6 L595.5,131.6 L595.8,135.1 L596.0,138.6 L596.2,142.1 L596.5,145.5 L596.8,149.0 L597.0,152.7 L597.2,152.9 L597.5,153.1 L597.8,152.9 L598.0,152.8 L598.2,152.6 L598.5,152.5 L598.8,152.3 L599.0,152.2 L599.2,152.0 L599.5,151.8 L599.8,152.2 L600.0,152.5 L600.2,152.8 L600.5,153.1 L600.8,152.8 L601.0,152.6 L601.2,152.3 L601.5,152.0 L601.8,152.2 L602.0,152.3 L602.2,152.4 L602.5,152.5 L602.8,152.4 L603.0,152.2 L603.2,152.1 L603.5,151.9 L603.8,152.0 L604.0,152.1 L604.2,152.2 L604.5,152.2 L604.8,152.4 L605.0,152.6 L605.2,152.8 L605.5,152.9 L605.8,147.3 L606.0,142.1 L606.2,136.8 L606.5,131.6 L606.8,131.6 L607.0,131.6 L607.2,131.6 L607.5,131.6 L607.8,126.8 L608.0,115.0 L608.2,105.7 L608.5,105.7 L608.8,97.1 L609.0,78.7 L609.2,78.7 L609.5,78.7 L609.8,78.7 L610.0,78.7 L610.2,97.1 L610.5,80.8 L610.8,80.8 L611.0,80.8 L611.2,80.8 L611.5,80.8 L611.8,97.9 L612.0,79.7 L612.2,79.7 L612.5,79.7 L612.8,79.7 L613.0,79.7 L613.2,94.9 L613.5,94.9 L613.8,94.9 L614.0,80.8 L614.2,80.8 L614.5,80.8 L614.8,80.8 L615.0,80.8 L615.2,93.8 L615.5,93.8 L615.8,80.1 L616.0,56.0 L616.2,56.0 L616.5,56.0 L616.8,56.0 L617.0,56.0 L617.2,58.1 L617.5,58.1 L617.8,58.1 L618.0,58.1 L618.2,70.0 L618.5,70.0 L618.8,70.0 L619.0,70.0 L619.2,90.6 L619.5,111.3 L619.8,129.4 L620.0,129.4 L620.2,135.2 L620.5,141.0 L620.5,157.5 Z" fill="#228b22"/><path d="M370,157.5 L370.5,140 L371.2,150 L371.5,157.5 Z M404,157.5 L404.5,140 L405.5,135 L407,140 L408.5,146 L410,150 L411,157.5 Z M481,157.5 L481.5,150 L482.3,157.5 Z M500,157.5 L501,152 L502,157.5 Z M510,157.5 L510.5,137 L512,138 L513.5,142 L514,157.5 Z M564.5,157.5 L566,150 L567,146 L568,143 L569,146 L570,152 L571,157.5 Z M591.5,157.5 L592.5,152 L593.5,150 L594.5,154 L595.5,157.5 Z M607.5,157.5 L608,148 L609,143 L610,140 L611,145 L612,135 L613,130 L614,140 L615,110 L616,116 L617,132 L618,140 L619,152 L620,157.5 Z " fill="#4682b4"/><line x1="346.5" y1="156.7" x2="620" y2="156.7" stroke="#ffa500" stroke-width="1" stroke-dasharray="3 9"/><rect x="404.3" y="134" width="1.2" height="4" fill="#ffa500"/><rect x="405.8" y="145" width="1.2" height="4" fill="#ffa500"/><rect x="409.5" y="150" width="1.2" height="4" fill="#ffa500"/><rect x="510.5" y="134" width="1.2" height="4" fill="#ffa500"/><rect x="567" y="139" width="1.2" height="4" fill="#ffa500"/><rect x="615" y="102" width="1.2" height="4" fill="#ffa500"/><rect x="611" y="120" width="1.2" height="4" fill="#ffa500"/><rect x="609" y="134" width="1.2" height="4" fill="#ffa500"/><rect x="616" y="126" width="1.2" height="4" fill="#ffa500"/><rect x="613" y="145" width="1.2" height="4" fill="#ffa500"/><rect x="593" y="147" width="1.2" height="4" fill="#ffa500"/><line x1="346.5" y1="49.5" x2="625.5" y2="49.5" stroke="#333333" stroke-width="1.2"/><line x1="621.5" y1="49.5" x2="621.5" y2="157.5" stroke="#333333" stroke-width="1.2"/><line x1="621.5" y1="157.5" x2="625.5" y2="157.5" stroke="#333333" stroke-width="1.2"/><line x1="346.5" y1="157.5" x2="621.5" y2="157.5" stroke="#333333" stroke-width="1.2"/><line x1="346.5" y1="49.5" x2="346.5" y2="157.5" stroke="#333333" stroke-width="1"/><line x1="342.5" y1="157.5" x2="346.5" y2="157.5" stroke="#333333" stroke-width="1.2"/><text x="339.5" y="161.6" font-size="10" text-anchor="end" fill="#111">0</text><line x1="342.5" y1="135.9" x2="346.5" y2="135.9" stroke="#333333" stroke-width="1.2"/><text x="339.5" y="140.0" font-size="10" text-anchor="end" fill="#111">20</text><line x1="342.5" y1="114.3" x2="346.5" y2="114.3" stroke="#333333" stroke-width="1.2"/><text x="339.5" y="118.39999999999999" font-size="10" text-anchor="end" fill="#111">40</text><line x1="342.5" y1="92.7" x2="346.5" y2="92.7" stroke="#333333" stroke-width="1.2"/><text x="339.5" y="96.8" font-size="10" text-anchor="end" fill="#111">60</text><line x1="342.5" y1="71.1" x2="346.5" y2="71.1" stroke="#333333" stroke-width="1.2"/><text x="339.5" y="75.19999999999999" font-size="10" text-anchor="end" fill="#111">80</text><line x1="342.5" y1="49.5" x2="346.5" y2="49.5" stroke="#333333" stroke-width="1.2"/><text x="339.5" y="53.6" font-size="10" text-anchor="end" fill="#111">100</text><line x1="346.5" y1="157.5" x2="346.5" y2="162.5" stroke="#333333" stroke-width="1.2"/><line x1="369.5" y1="157.5" x2="369.5" y2="162.5" stroke="#333333" stroke-width="1.2"/><line x1="392.5" y1="157.5" x2="392.5" y2="162.5" stroke="#333333" stroke-width="1.2"/><line x1="415.5" y1="157.5" x2="415.5" y2="162.5" stroke="#333333" stroke-width="1.2"/><line x1="438.5" y1="157.5" x2="438.5" y2="162.5" stroke="#333333" stroke-width="1.2"/><line x1="461.5" y1="157.5" x2="461.5" y2="162.5" stroke="#333333" stroke-width="1.2"/><line x1="484.5" y1="157.5" x2="484.5" y2="162.5" stroke="#333333" stroke-width="1.2"/><line x1="507.5" y1="157.5" x2="507.5" y2="162.5" stroke="#333333" stroke-width="1.2"/><line x1="529.5" y1="157.5" x2="529.5" y2="162.5" stroke="#333333" stroke-width="1.2"/><line x1="552.5" y1="157.5" x2="552.5" y2="162.5" stroke="#333333" stroke-width="1.2"/><line x1="575.5" y1="157.5" x2="575.5" y2="162.5" stroke="#333333" stroke-width="1.2"/><line x1="598.5" y1="157.5" x2="598.5" y2="162.5" stroke="#333333" stroke-width="1.2"/><line x1="621.5" y1="157.5" x2="621.5" y2="162.5" stroke="#333333" stroke-width="1.2"/><text transform="translate(349.9,165.6) rotate(-90)" font-size="10" text-anchor="end" fill="#111">04:00</text><text transform="translate(372.9,165.6) rotate(-90)" font-size="10" text-anchor="end" fill="#111">05:00</text><text transform="translate(395.9,165.6) rotate(-90)" font-size="10" text-anchor="end" fill="#111">06:00</text><text transform="translate(418.9,165.6) rotate(-90)" font-size="10" text-anchor="end" fill="#111">07:00</text><text transform="translate(441.9,165.6) rotate(-90)" font-size="10" text-anchor="end" fill="#111">08:00</text><text transform="translate(464.9,165.6) rotate(-90)" font-size="10" text-anchor="end" fill="#111">09:00</text><text transform="translate(487.9,165.6) rotate(-90)" font-size="10" text-anchor="end" fill="#111">10:00</text><text transform="translate(510.9,165.6) rotate(-90)" font-size="10" text-anchor="end" fill="#111">11:00</text><text transform="translate(532.9,165.6) rotate(-90)" font-size="10" text-anchor="end" fill="#111">12:00</text><text transform="translate(555.9,165.6) rotate(-90)" font-size="10" text-anchor="end" fill="#111">13:00</text><text transform="translate(578.9,165.6) rotate(-90)" font-size="10" text-anchor="end" fill="#111">14:00</text><text transform="translate(601.9,165.6) rotate(-90)" font-size="10" text-anchor="end" fill="#111">15:00</text></svg>
<svg style="left:637px;top:25px" width="320" height="167" viewBox="637 25 320 167"><line x1="657" y1="148.0" x2="938.5" y2="148.0" stroke="#cfcfcf" stroke-width="1"/><line x1="657" y1="136.05" x2="938.5" y2="136.05" stroke="#cfcfcf" stroke-width="1"/><line x1="657" y1="112.15" x2="938.5" y2="112.15" stroke="#cfcfcf" stroke-width="1"/><line x1="657" y1="88.25" x2="938.5" y2="88.25" stroke="#cfcfcf" stroke-width="1"/><line x1="657" y1="64.35000000000001" x2="938.5" y2="64.35000000000001" stroke="#cfcfcf" stroke-width="1"/><line x1="657" y1="40.45" x2="938.5" y2="40.45" stroke="#cfcfcf" stroke-width="1"/><line x1="665.5" y1="29.5" x2="665.5" y2="148" stroke="#cfcfcf" stroke-width="1"/><line x1="688.5" y1="29.5" x2="688.5" y2="148" stroke="#cfcfcf" stroke-width="1"/><line x1="712.5" y1="29.5" x2="712.5" y2="148" stroke="#cfcfcf" stroke-width="1"/><line x1="735.5" y1="29.5" x2="735.5" y2="148" stroke="#cfcfcf" stroke-width="1"/><line x1="758.5" y1="29.5" x2="758.5" y2="148" stroke="#cfcfcf" stroke-width="1"/><line x1="782.5" y1="29.5" x2="782.5" y2="148" stroke="#cfcfcf" stroke-width="1"/><line x1="805.5" y1="29.5" x2="805.5" y2="148" stroke="#cfcfcf" stroke-width="1"/><line x1="829.5" y1="29.5" x2="829.5" y2="148" stroke="#cfcfcf" stroke-width="1"/><line x1="852.5" y1="29.5" x2="852.5" y2="148" stroke="#cfcfcf" stroke-width="1"/><line x1="875.5" y1="29.5" x2="875.5" y2="148" stroke="#cfcfcf" stroke-width="1"/><line x1="899.5" y1="29.5" x2="899.5" y2="148" stroke="#cfcfcf" stroke-width="1"/><line x1="922.5" y1="29.5" x2="922.5" y2="148" stroke="#cfcfcf" stroke-width="1"/><path d="M657.5,29.5 L657.5,29.5 L657.5,148 L658.5,148 L658.5,143.2 L659.7,143.2 L659.7,148 L663.3,148 L663.3,110 L664.5,110 L664.5,148 L665.5,148 L665.5,146 L666.5,146 L666.5,148 L668.5,148 L668.5,146.5 L670,146.5 L670,148 L672.5,148 L672.5,143.2 L674.5,143.2 L674.5,138.4 L676,138.4 L676,137 L677.5,137 L677.5,135.5 L680,135.5 L680,134.5 L680.5,134.5 L680.5,128.2 L682,128.2 L682,134.5 L683,134.5 L683,136 L686.5,136 L686.5,136 L686.5,136 L686.5,132 L688,132 L688,136 L689,136 L689,133.5 L690.5,133.5 L690.5,136 L692,136 L692,136.5 L693,136.5 L693,138 L694.5,138 L694.5,140 L695.5,140 L695.5,142 L696.5,142 L696.5,144 L697.5,144 L697.5,148 L700.5,148 L700.5,148 L700.5,148 L700.5,141 L701.5,141 L701.5,135.5 L706.5,135.5 L706.5,135.5 L707.3,135.5 L707.3,128.2 L708.7,128.2 L708.7,148 L713,148 L713,128.2 L714.5,128.2 L714.5,140 L715.5,140 L715.5,148 L721,148 L721,145 L722.5,145 L722.5,148 L728.7,148 L728.7,127.4 L730,127.4 L730,136.5 L731,136.5 L731,148 L732.5,148 L732.5,131 L734,131 L734,143 L735,143 L735,148 L737.5,148 L737.5,140 L739,140 L739,148 L744.5,148 L744.5,130 L746,130 L746,148 L747,148 L747,141.8 L748,141.8 L748,148 L752.5,148 L752.5,139.3 L753.5,139.3 L753.5,144.5 L757,144.5 L757,144.5 L759,144.5 L759,143 L760,143 L760,148 L769,148 L769,145.5 L770.5,145.5 L770.5,148 L776,148 L776,146.5 L777,146.5 L777,148 L782,148 L782,146.5 L784,146.5 L784,148 L790,148 L790,147 L791,147 L791,148 L793.5,148 L793.5,143 L794.5,143 L794.5,136.5 L797,136.5 L797,135 L798,135 L798,133.5 L800,133.5 L800,133.5 L801,133.5 L801,142 L802,142 L802,148 L806.5,148 L806.5,136 L807.5,136 L807.5,148 L810,148 L810,144 L811,144 L811,148 L819,148 L819,146 L820,146 L820,148 L822,148 L822,143.5 L823,143.5 L823,148 L826.3,148 L826.3,89 L827.3,89 L827.3,148 L828,148 L828,146 L829,146 L829,148 L834.3,148 L834.3,85.3 L835.4,85.3 L835.4,148 L839,148 L839,139.3 L840,139.3 L840,148 L843,148 L843,145.6 L843.8,145.6 L843.8,120.5 L844.8,120.5 L844.8,138.9 L846,138.9 L846,148 L846.5,148 L846.5,122 L848,122 L848,118.8 L849.5,118.8 L849.5,36.3 L850.5,36.3 L850.5,118.8 L851,118.8 L851,125 L852,125 L852,138 L853,138 L853,148 L865,148 L865,146 L867,146 L867,148 L871,148 L871,142.5 L872,142.5 L872,148 L884,148 L884,145 L886,145 L886,139 L888,139 L888,133.5 L890,133.5 L890,134.8 L892,134.8 L892,136.5 L894,136.5 L894,140 L896,140 L896,148 L901.3,148 L901.3,138.5 L902.3,138.5 L902.3,148 L904,148 L904,144 L905,144 L905,148 L914,148 L914,145 L917.5,145 L917.5,145 L918,145 L918,137.4 L919,137.4 L919,148 L922,148 L922,146 L923,146 L923,148 L928.3,148 L928.3,121.3 L929.3,121.3 L929.3,148 L932,148 L932,141 L934,141 L934,141 L935,141 L935,131.5 L937,131.5 L937,132 L938,132 L938,148" fill="none" stroke="#4682b4" stroke-width="1.5"/><line x1="657" y1="29.5" x2="942.5" y2="29.5" stroke="#333333" stroke-width="1.2"/><line x1="938.5" y1="29.5" x2="938.5" y2="148" stroke="#333333" stroke-width="1.2"/><line x1="938.5" y1="148" x2="942.5" y2="148" stroke="#333333" stroke-width="1.2"/><line x1="657" y1="148" x2="938.5" y2="148" stroke="#333333" stroke-width="1.2"/><line x1="657" y1="29.5" x2="657" y2="148" stroke="#4682b4" stroke-width="2"/><line x1="653" y1="148.0" x2="657" y2="148.0" stroke="#4682b4" stroke-width="1.2"/><text x="649.5" y="152.1" font-size="10" text-anchor="end" fill="#111">1</text><line x1="653" y1="136.05" x2="657" y2="136.05" stroke="#4682b4" stroke-width="1.2"/><line x1="653" y1="112.15" x2="657" y2="112.15" stroke="#4682b4" stroke-width="1.2"/><text x="649.5" y="116.25" font-size="10" text-anchor="end" fill="#111">4</text><line x1="653" y1="88.25" x2="657" y2="88.25" stroke="#4682b4" stroke-width="1.2"/><text x="649.5" y="92.35" font-size="10" text-anchor="end" fill="#111">6</text><line x1="653" y1="64.35000000000001" x2="657" y2="64.35000000000001" stroke="#4682b4" stroke-width="1.2"/><text x="649.5" y="68.45" font-size="10" text-anchor="end" fill="#111">8</text><line x1="653" y1="40.45" x2="657" y2="40.45" stroke="#4682b4" stroke-width="1.2"/><text x="649.5" y="44.550000000000004" font-size="10" text-anchor="end" fill="#111">10</text><line x1="657" y1="148" x2="657" y2="153" stroke="#333333" stroke-width="1.2"/><line x1="665.5" y1="148" x2="665.5" y2="153" stroke="#333333" stroke-width="1.2"/><line x1="688.5" y1="148" x2="688.5" y2="153" stroke="#333333" stroke-width="1.2"/><line x1="712.5" y1="148" x2="712.5" y2="153" stroke="#333333" stroke-width="1.2"/><line x1="735.5" y1="148" x2="735.5" y2="153" stroke="#333333" stroke-width="1.2"/><line x1="758.5" y1="148" x2="758.5" y2="153" stroke="#333333" stroke-width="1.2"/><line x1="782.5" y1="148" x2="782.5" y2="153" stroke="#333333" stroke-width="1.2"/><line x1="805.5" y1="148" x2="805.5" y2="153" stroke="#333333" stroke-width="1.2"/><line x1="829.5" y1="148" x2="829.5" y2="153" stroke="#333333" stroke-width="1.2"/><line x1="852.5" y1="148" x2="852.5" y2="153" stroke="#333333" stroke-width="1.2"/><line x1="875.5" y1="148" x2="875.5" y2="153" stroke="#333333" stroke-width="1.2"/><line x1="899.5" y1="148" x2="899.5" y2="153" stroke="#333333" stroke-width="1.2"/><line x1="922.5" y1="148" x2="922.5" y2="153" stroke="#333333" stroke-width="1.2"/><line x1="938.5" y1="148" x2="938.5" y2="153" stroke="#333333" stroke-width="1.2"/><text transform="translate(668.9,156.6) rotate(-90)" font-size="10" text-anchor="end" fill="#111">18:00</text><text transform="translate(692.26,156.6) rotate(-90)" font-size="10" text-anchor="end" fill="#111">Tue 22</text><text transform="translate(715.62,156.6) rotate(-90)" font-size="10" text-anchor="end" fill="#111">06:00</text><text transform="translate(738.98,156.6) rotate(-90)" font-size="10" text-anchor="end" fill="#111">12:00</text><text transform="translate(762.34,156.6) rotate(-90)" font-size="10" text-anchor="end" fill="#111">18:00</text><text transform="translate(785.6999999999999,156.6) rotate(-90)" font-size="10" text-anchor="end" fill="#111">Wed 23</text><text transform="translate(809.06,156.6) rotate(-90)" font-size="10" text-anchor="end" fill="#111">06:00</text><text transform="translate(832.42,156.6) rotate(-90)" font-size="10" text-anchor="end" fill="#111">12:00</text><text transform="translate(855.78,156.6) rotate(-90)" font-size="10" text-anchor="end" fill="#111">18:00</text><text transform="translate(879.14,156.6) rotate(-90)" font-size="10" text-anchor="end" fill="#111">Thu 24</text><text transform="translate(902.5,156.6) rotate(-90)" font-size="10" text-anchor="end" fill="#111">06:00</text><text transform="translate(925.86,156.6) rotate(-90)" font-size="10" text-anchor="end" fill="#111">12:00</text><path d="M940,137 L946,129 L952,129 L952,145 L946,145 Z" fill="#4682b4"/><line x1="652" y1="29.5" x2="657" y2="29.5" stroke="#4682b4" stroke-width="1.5"/></svg>
<svg style="left:5px;top:222px" width="320" height="167" viewBox="5 222 320 167"><circle cx="72" cy="231.7" r="5.8" fill="#4682b4"/><text x="81" y="235.5" font-size="10.4" fill="#111" letter-spacing="0.07">Real memory used %: avg - 15m: 90</text><circle cx="72" cy="244.9" r="5.8" fill="#ffa500"/><text x="81" y="248.70000000000002" font-size="10.4" fill="#111" letter-spacing="0.07">Swap used %: avg - 15m: 17.7</text><line x1="30.5" y1="347.3" x2="305.5" y2="347.3" stroke="#cfcfcf" stroke-width="1"/><line x1="30.5" y1="329.74" x2="305.5" y2="329.74" stroke="#cfcfcf" stroke-width="1"/><line x1="30.5" y1="312.18" x2="305.5" y2="312.18" stroke="#cfcfcf" stroke-width="1"/><line x1="30.5" y1="294.62" x2="305.5" y2="294.62" stroke="#cfcfcf" stroke-width="1"/><line x1="30.5" y1="277.06" x2="305.5" y2="277.06" stroke="#cfcfcf" stroke-width="1"/><line x1="30.5" y1="259.5" x2="305.5" y2="259.5" stroke="#cfcfcf" stroke-width="1"/><line x1="53.5" y1="259.5" x2="53.5" y2="347.3" stroke="#cfcfcf" stroke-width="1"/><line x1="87.5" y1="259.5" x2="87.5" y2="347.3" stroke="#cfcfcf" stroke-width="1"/><line x1="122.5" y1="259.5" x2="122.5" y2="347.3" stroke="#cfcfcf" stroke-width="1"/><line x1="156.5" y1="259.5" x2="156.5" y2="347.3" stroke="#cfcfcf" stroke-width="1"/><line x1="190.5" y1="259.5" x2="190.5" y2="347.3" stroke="#cfcfcf" stroke-width="1"/><line x1="225.5" y1="259.5" x2="225.5" y2="347.3" stroke="#cfcfcf" stroke-width="1"/><line x1="259.5" y1="259.5" x2="259.5" y2="347.3" stroke="#cfcfcf" stroke-width="1"/><line x1="294.5" y1="259.5" x2="294.5" y2="347.3" stroke="#cfcfcf" stroke-width="1"/><path d="M30.5,269.7 L31,269.7 L31,271.2 L35.5,271.2 L35.5,270 L38,270 L38,268.5 L42,268.5 L42,269.5 L45,269.5 L45,268.5 L48,268.5 L48,269.5 L57,269.5 L57,271 L60,271 L60,270 L67,270 L67,268.5 L72,268.5 L72,273.5 L75,273.5 L75,272.5 L79,272.5 L79,270.5 L83,270.5 L83,269.5 L86,269.5 L86,271.5 L88,271.5 L88,272.5 L91,272.5 L91,268.5 L93,268.5 L93,267.5 L96,267.5 L96,269.5 L98,269.5 L98,269 L99,269 L99,268.5 L110,268.5 L110,267 L114,267 L114,266.5 L118,266.5 L118,267.5 L120,267.5 L120,269.5 L125,269.5 L125,268.5 L130,268.5 L130,269.5 L136,269.5 L136,268.5 L148,268.5 L148,269.5 L157,269.5 L157,268.5 L160,268.5 L160,266.5 L173.4,266.5 L173.4,266.15 L179.5,266.15 L179.5,265.38 L182.56,265.38 L182.56,267.21 L188.66,267.21 L188.66,269.2 L190.19,269.2 L190.19,268.28 L196.3,268.28 L196.3,264.47 L202.4,264.47 L202.4,265.38 L208.51,265.38 L208.51,267.21 L216.15,267.21 L216.15,268.28 L222.25,268.28 L222.25,271.03 L225.31,271.03 L225.31,272.25 L229.12,272.25 L229.12,271.03 L235.23,271.03 L235.23,270.27 L236.76,270.27 L236.76,273.63 L239.81,273.63 L239.81,276.07 L242.86,276.07 L242.86,272.56 L245.15,272.56 L245.15,268.74 L248.21,268.74 L248.21,270.27 L251.26,270.27 L251.26,267.21 L253.55,267.21 L253.55,266.15 L256.6,266.15 L256.6,267.98 L259.66,267.98 L259.66,267.21 L265.76,267.21 L265.76,265.38 L268.82,265.38 L268.82,269.5 L271.87,269.5 L271.87,268.44 L274.92,268.44 L274.92,270.27 L277.21,270.27 L277.21,266.15 L279.5,266.15 L279.5,273.32 L282.56,273.32 L282.56,274.39 L285.61,274.39 L285.61,273.32 L288.66,273.32 L288.66,270.27 L291.72,270.27 L291.72,269.5 L294.77,269.5 L294.77,273.32 L296.3,273.32 L296.3,270.27 L299.35,270.27 L299.35,266.15 L303.93,266.15 L303.93,266.15" fill="none" stroke="#4682b4" stroke-width="1.2"/><path d="M30.5,334.4 L47.7,334.4 L47.7,333.3 L53.5,333.3 L53.5,332.3 L196.5,332.3 L196.5,333.4 L293.7,333.4 L293.7,333.4 L296,333.4 L296,333 L299,333 L299,332 L302,332 L302,331" fill="none" stroke="#ffa500" stroke-width="1.2"/><circle cx="304" cy="268" r="2.6" fill="#fff" stroke="#4682b4" stroke-width="1.3"/><circle cx="304" cy="331" r="2.6" fill="#fff" stroke="#ffa500" stroke-width="1.3"/><line x1="30.5" y1="259.5" x2="309.5" y2="259.5" stroke="#333333" stroke-width="1.2"/><line x1="305.5" y1="259.5" x2="305.5" y2="347.3" stroke="#333333" stroke-width="1.2"/><line x1="305.5" y1="347.3" x2="309.5" y2="347.3" stroke="#333333" stroke-width="1.2"/><line x1="30.5" y1="347.3" x2="305.5" y2="347.3" stroke="#333333" stroke-width="1.2"/><line x1="30.5" y1="259.5" x2="30.5" y2="347.3" stroke="#333333" stroke-width="1"/><line x1="26.5" y1="347.3" x2="30.5" y2="347.3" stroke="#333333" stroke-width="1.2"/><text x="22.5" y="351.40000000000003" font-size="10" text-anchor="end" fill="#111">0</text><line x1="26.5" y1="329.74" x2="30.5" y2="329.74" stroke="#333333" stroke-width="1.2"/><text x="22.5" y="333.84000000000003" font-size="10" text-anchor="end" fill="#111">20</text><line x1="26.5" y1="312.18" x2="30.5" y2="312.18" stroke="#333333" stroke-width="1.2"/><text x="22.5" y="316.28000000000003" font-size="10" text-anchor="end" fill="#111">40</text><line x1="26.5" y1="294.62" x2="30.5" y2="294.62" stroke="#333333" stroke-width="1.2"/><text x="22.5" y="298.72" font-size="10" text-anchor="end" fill="#111">60</text><line x1="26.5" y1="277.06" x2="30.5" y2="277.06" stroke="#333333" stroke-width="1.2"/><text x="22.5" y="281.16" font-size="10" text-anchor="end" fill="#111">80</text><line x1="26.5" y1="259.5" x2="30.5" y2="259.5" stroke="#333333" stroke-width="1.2"/><text x="22.5" y="263.6" font-size="10" text-anchor="end" fill="#111">100</text><line x1="30.5" y1="347.3" x2="30.5" y2="352.3" stroke="#333333" stroke-width="1.2"/><line x1="53.5" y1="347.3" x2="53.5" y2="352.3" stroke="#333333" stroke-width="1.2"/><line x1="87.5" y1="347.3" x2="87.5" y2="352.3" stroke="#333333" stroke-width="1.2"/><line x1="122.5" y1="347.3" x2="122.5" y2="352.3" stroke="#333333" stroke-width="1.2"/><line x1="156.5" y1="347.3" x2="156.5" y2="352.3" stroke="#333333" stroke-width="1.2"/><line x1="190.5" y1="347.3" x2="190.5" y2="352.3" stroke="#333333" stroke-width="1.2"/><line x1="225.5" y1="347.3" x2="225.5" y2="352.3" stroke="#333333" stroke-width="1.2"/><line x1="259.5" y1="347.3" x2="259.5" y2="352.3" stroke="#333333" stroke-width="1.2"/><line x1="294.5" y1="347.3" x2="294.5" y2="352.3" stroke="#333333" stroke-width="1.2"/><line x1="305.5" y1="347.3" x2="305.5" y2="352.3" stroke="#333333" stroke-width="1.2"/><text transform="translate(56.9,355.6) rotate(-90)" font-size="10" text-anchor="end" fill="#111">18:00</text><text transform="translate(90.9,355.6) rotate(-90)" font-size="10" text-anchor="end" fill="#111">21:00</text><text transform="translate(125.9,355.6) rotate(-90)" font-size="10" text-anchor="end" fill="#111">Thu 24</text><text transform="translate(159.9,355.6) rotate(-90)" font-size="10" text-anchor="end" fill="#111">03:00</text><text transform="translate(193.9,355.6) rotate(-90)" font-size="10" text-anchor="end" fill="#111">06:00</text><text transform="translate(228.9,355.6) rotate(-90)" font-size="10" text-anchor="end" fill="#111">09:00</text><text transform="translate(262.9,355.6) rotate(-90)" font-size="10" text-anchor="end" fill="#111">12:00</text><text transform="translate(297.9,355.6) rotate(-90)" font-size="10" text-anchor="end" fill="#111">15:00</text></svg>
<svg style="left:321px;top:222px" width="306" height="167" viewBox="321 222 306 167"><line x1="349.5" y1="347.0" x2="477" y2="347.0" stroke="#cfcfcf" stroke-width="1"/><line x1="349.5" y1="317.875" x2="477" y2="317.875" stroke="#cfcfcf" stroke-width="1"/><line x1="349.5" y1="288.75" x2="477" y2="288.75" stroke="#cfcfcf" stroke-width="1"/><line x1="349.5" y1="259.625" x2="477" y2="259.625" stroke="#cfcfcf" stroke-width="1"/><line x1="349.5" y1="230.5" x2="477" y2="230.5" stroke="#cfcfcf" stroke-width="1"/><line x1="360.5" y1="230.5" x2="360.5" y2="347" stroke="#cfcfcf" stroke-width="1"/><line x1="376.5" y1="230.5" x2="376.5" y2="347" stroke="#cfcfcf" stroke-width="1"/><line x1="392.5" y1="230.5" x2="392.5" y2="347" stroke="#cfcfcf" stroke-width="1"/><line x1="408.5" y1="230.5" x2="408.5" y2="347" stroke="#cfcfcf" stroke-width="1"/><line x1="424.5" y1="230.5" x2="424.5" y2="347" stroke="#cfcfcf" stroke-width="1"/><line x1="440.5" y1="230.5" x2="440.5" y2="347" stroke="#cfcfcf" stroke-width="1"/><line x1="456.5" y1="230.5" x2="456.5" y2="347" stroke="#cfcfcf" stroke-width="1"/><line x1="472.5" y1="230.5" x2="472.5" y2="347" stroke="#cfcfcf" stroke-width="1"/><path d="M349.5,248.58 L349.12,248.58 L349.12,248.58 L352.2,248.58 L352.2,246.93 L355.29,246.93 L355.29,247.55 L358.37,247.55 L358.37,246.93 L360.43,246.93 L360.43,247.96 L362.49,247.96 L362.49,246.52 L365.58,246.52 L365.58,247.55 L368.66,247.55 L368.66,244.87 L369.69,244.87 L369.69,251.05 L371.75,251.05 L371.75,248.58 L373.81,248.58 L373.81,247.55 L376.89,247.55 L376.89,246.93 L378.95,246.93 L378.95,245.49 L381.01,245.49 L381.01,246.11 L383.07,246.11 L383.07,244.46 L386.15,244.46 L386.15,246.52 L389.24,246.52 L389.24,245.49 L392.33,245.49 L392.33,246.93 L395.41,246.93 L395.41,246.11 L398.5,246.11 L398.5,247.55 L401.58,247.55 L401.58,246.11 L404.67,246.11 L404.67,245.49 L408.79,245.49 L408.79,244.05 L410.0,244.05 L410.0,243.43 L414.12,243.43 L414.12,242.4 L418.23,242.4 L418.23,241.99 L420.29,241.99 L420.29,244.46 L421.32,244.46 L421.32,243.43 L427.49,243.43 L427.49,240.35 L430.58,240.35 L430.58,242.4 L432.63,242.4 L432.63,244.05 L436.75,244.05 L436.75,246.11 L440.86,246.11 L440.86,250.22 L442.92,250.22 L442.92,247.55 L446.01,247.55 L446.01,254.34 L448.07,254.34 L448.07,250.22 L450.12,250.22 L450.12,246.52 L453.21,246.52 L453.21,243.43 L456.3,243.43 L456.3,244.46 L459.38,244.46 L459.38,241.99 L460.41,241.99 L460.41,247.55 L463.5,247.55 L463.5,243.43 L465.56,243.43 L465.56,251.66 L467.61,251.66 L467.61,253.72 L469.67,253.72 L469.67,249.6 L471.73,249.6 L471.73,247.55 L474.81,247.55 L474.81,243.43" fill="none" stroke="#9acd32" stroke-width="1.25"/><path d="M349.5,304.13 L349.12,304.13 L349.12,304.13 L350.14,304.13 L350.14,301.05 L354.26,301.05 L354.26,302.49 L356.32,302.49 L356.32,312.36 L358.37,312.36 L358.37,301.05 L362.49,301.05 L362.49,302.07 L373.81,302.07 L373.81,300.02 L375.86,300.02 L375.86,298.99 L377.92,298.99 L377.92,300.02 L384.09,300.02 L384.09,298.37 L386.15,298.37 L386.15,300.02 L396.44,300.02 L396.44,301.05 L406.73,301.05 L406.73,300.43 L410.0,300.43 L410.0,300.43 L414.12,300.43 L414.12,301.05 L419.26,301.05 L419.26,297.96 L420.29,297.96 L420.29,300.02 L424.4,300.02 L424.4,301.05 L427.49,301.05 L427.49,293.84 L428.52,293.84 L428.52,294.87 L430.58,294.87 L430.58,296.93 L433.66,296.93 L433.66,298.99 L436.75,298.99 L436.75,300.02 L439.84,300.02 L439.84,303.1 L442.92,303.1 L442.92,305.16 L446.01,305.16 L446.01,310.3 L449.09,310.3 L449.09,315.45 L450.12,315.45 L450.12,303.1 L454.24,303.1 L454.24,301.05 L458.35,301.05 L458.35,302.07 L462.47,302.07 L462.47,309.28 L463.5,309.28 L463.5,310.3 L467.61,310.3 L467.61,309.28 L471.73,309.28 L471.73,307.22 L474.81,307.22 L474.81,307.22" fill="none" stroke="#4682b4" stroke-width="1.25"/><path d="M349.5,309.28 L349.12,309.28 L349.12,309.28 L350.14,309.28 L350.14,307.22 L353.23,307.22 L353.23,307.84 L354.26,307.84 L354.26,310.3 L356.32,310.3 L356.32,312.36 L357.35,312.36 L357.35,307.84 L365.58,307.84 L365.58,308.25 L369.69,308.25 L369.69,312.36 L376.89,312.36 L376.89,312.36 L377.92,312.36 L377.92,310.3 L382.04,310.3 L382.04,308.66 L388.21,308.66 L388.21,307.22 L390.27,307.22 L390.27,308.66 L410.0,308.66 L410.0,308.66 L419.26,308.66 L419.26,306.19 L421.32,306.19 L421.32,307.84 L427.49,307.84 L427.49,285.61 L428.52,285.61 L428.52,286.64 L431.6,286.64 L431.6,289.73 L433.66,289.73 L433.66,290.76 L436.75,290.76 L436.75,293.84 L440.86,293.84 L440.86,295.9 L443.95,295.9 L443.95,302.07 L447.04,302.07 L447.04,306.19 L449.09,306.19 L449.09,313.39 L451.15,313.39 L451.15,309.28 L454.24,309.28 L454.24,308.25 L458.35,308.25 L458.35,307.22 L462.47,307.22 L462.47,311.33 L465.56,311.33 L465.56,312.77 L471.73,312.77 L471.73,311.33 L474.81,311.33 L474.81,311.33" fill="none" stroke="#228b22" stroke-width="1.25"/><path d="M349.5,312.77 L349.12,312.77 L349.12,312.77 L351.17,312.77 L351.17,315.45 L357.35,315.45 L357.35,318.53 L360.43,318.53 L360.43,319.56 L365.58,319.56 L365.58,318.53 L368.66,318.53 L368.66,316.48 L373.81,316.48 L373.81,314.42 L377.92,314.42 L377.92,316.07 L382.04,316.07 L382.04,316.89 L398.5,316.89 L398.5,316.89 L406.73,316.89 L406.73,315.45 L410.0,315.45 L410.0,314.83 L420.29,314.83 L420.29,316.07 L425.43,316.07 L425.43,318.53 L427.49,318.53 L427.49,330.88 L428.52,330.88 L428.52,334.58 L438.81,334.58 L438.81,332.94 L446.01,332.94 L446.01,318.53 L449.09,318.53 L449.09,315.45 L450.12,315.45 L450.12,316.48 L458.35,316.48 L458.35,315.45 L465.56,315.45 L465.56,318.53 L471.73,318.53 L471.73,315.45 L474.81,315.45 L474.81,315.45" fill="none" stroke="#ffa500" stroke-width="1.25"/><path d="M349.5,335.0 L349.12,335.0 L349.12,335.0 L353.23,335.0 L353.23,333.97 L357.35,333.97 L357.35,332.94 L361.46,332.94 L361.46,334.58 L365.58,334.58 L365.58,336.02 L368.66,336.02 L368.66,329.85 L370.72,329.85 L370.72,331.91 L374.84,331.91 L374.84,333.35 L377.92,333.35 L377.92,336.02 L381.01,336.02 L381.01,335.0 L384.09,335.0 L384.09,336.02 L388.21,336.02 L388.21,337.05 L392.33,337.05 L392.33,335.0 L396.44,335.0 L396.44,336.02 L400.56,336.02 L400.56,334.58 L404.67,334.58 L404.67,335.41 L408.79,335.41 L408.79,337.05 L410.0,337.05 L410.0,337.05 L414.12,337.05 L414.12,335.0 L418.23,335.0 L418.23,339.11 L421.32,339.11 L421.32,335.0 L427.49,335.0 L427.49,340.14 L430.58,340.14 L430.58,337.05 L433.66,337.05 L433.66,335.0 L438.81,335.0 L438.81,331.91 L442.92,331.91 L442.92,333.97 L447.04,333.97 L447.04,325.74 L448.07,325.74 L448.07,330.88 L450.12,330.88 L450.12,335.0 L454.24,335.0 L454.24,333.97 L458.35,333.97 L458.35,337.05 L462.47,337.05 L462.47,332.94 L465.56,332.94 L465.56,328.82 L469.67,328.82 L469.67,331.91 L473.79,331.91 L473.79,335.0 L475.43,335.0 L475.43,335.0" fill="none" stroke="#800000" stroke-width="1.25"/><path d="M349.5,346.31 L349.12,346.31 L349.12,346.31 L375.86,346.31 L375.86,345.7 L386.15,345.7 L386.15,344.87 L410.0,344.87 L410.0,345.7 L420.29,345.7 L420.29,344.87 L432.63,344.87 L432.63,344.26 L446.01,344.26 L446.01,341.17 L449.09,341.17 L449.09,344.26 L453.21,344.26 L453.21,345.7 L475.43,345.7 L475.43,345.7" fill="none" stroke="#8a2be2" stroke-width="1.25"/><line x1="349.5" y1="234.5" x2="476" y2="234.5" stroke="#ff0000" stroke-width="1.4"/><circle cx="476" cy="234.5" r="2.6" fill="none" stroke="#ff0000" stroke-width="1.3"/><circle cx="476" cy="245" r="2.6" fill="none" stroke="#9acd32" stroke-width="1.3"/><circle cx="476" cy="307" r="2.6" fill="none" stroke="#4682b4" stroke-width="1.3"/><circle cx="476" cy="311" r="2.6" fill="none" stroke="#228b22" stroke-width="1.3"/><circle cx="476" cy="316" r="2.6" fill="none" stroke="#ffa500" stroke-width="1.3"/><circle cx="476" cy="335" r="2.6" fill="none" stroke="#800000" stroke-width="1.3"/><circle cx="476" cy="345.5" r="2.6" fill="none" stroke="#8a2be2" stroke-width="1.3"/><line x1="349.5" y1="230.5" x2="477" y2="230.5" stroke="#333333" stroke-width="1.2"/><line x1="477" y1="230.5" x2="477" y2="347" stroke="#333333" stroke-width="1.2"/><line x1="477" y1="347" x2="481" y2="347" stroke="#333333" stroke-width="1.2"/><line x1="349.5" y1="347" x2="477" y2="347" stroke="#333333" stroke-width="1.2"/><line x1="349.5" y1="230.5" x2="349.5" y2="347" stroke="#333333" stroke-width="1"/><line x1="345.5" y1="347.0" x2="349.5" y2="347.0" stroke="#333333" stroke-width="1.2"/><text x="342.5" y="351.1" font-size="10" text-anchor="end" fill="#111">0</text><line x1="345.5" y1="317.875" x2="349.5" y2="317.875" stroke="#333333" stroke-width="1.2"/><text x="342.5" y="321.975" font-size="10" text-anchor="end" fill="#111">1GB</text><line x1="345.5" y1="288.75" x2="349.5" y2="288.75" stroke="#333333" stroke-width="1.2"/><text x="342.5" y="292.85" font-size="10" text-anchor="end" fill="#111">2GB</text><line x1="345.5" y1="259.625" x2="349.5" y2="259.625" stroke="#333333" stroke-width="1.2"/><text x="342.5" y="263.725" font-size="10" text-anchor="end" fill="#111">3GB</text><line x1="345.5" y1="230.5" x2="349.5" y2="230.5" stroke="#333333" stroke-width="1.2"/><text x="342.5" y="234.6" font-size="10" text-anchor="end" fill="#111">4GB</text><line x1="349.5" y1="347" x2="349.5" y2="352" stroke="#333333" stroke-width="1.2"/><line x1="360.5" y1="347" x2="360.5" y2="352" stroke="#333333" stroke-width="1.2"/><line x1="376.5" y1="347" x2="376.5" y2="352" stroke="#333333" stroke-width="1.2"/><line x1="392.5" y1="347" x2="392.5" y2="352" stroke="#333333" stroke-width="1.2"/><line x1="408.5" y1="347" x2="408.5" y2="352" stroke="#333333" stroke-width="1.2"/><line x1="424.5" y1="347" x2="424.5" y2="352" stroke="#333333" stroke-width="1.2"/><line x1="440.5" y1="347" x2="440.5" y2="352" stroke="#333333" stroke-width="1.2"/><line x1="456.5" y1="347" x2="456.5" y2="352" stroke="#333333" stroke-width="1.2"/><line x1="472.5" y1="347" x2="472.5" y2="352" stroke="#333333" stroke-width="1.2"/><line x1="477" y1="347" x2="477" y2="352" stroke="#333333" stroke-width="1.2"/><text transform="translate(363.9,355.6) rotate(-90)" font-size="10" text-anchor="end" fill="#111">18:00</text><text transform="translate(379.9,355.6) rotate(-90)" font-size="10" text-anchor="end" fill="#111">21:00</text><text transform="translate(395.9,355.6) rotate(-90)" font-size="10" text-anchor="end" fill="#111">Thu 24</text><text transform="translate(411.9,355.6) rotate(-90)" font-size="10" text-anchor="end" fill="#111">03:00</text><text transform="translate(427.9,355.6) rotate(-90)" font-size="10" text-anchor="end" fill="#111">06:00</text><text transform="translate(443.9,355.6) rotate(-90)" font-size="10" text-anchor="end" fill="#111">09:00</text><text transform="translate(459.9,355.6) rotate(-90)" font-size="10" text-anchor="end" fill="#111">12:00</text><text transform="translate(475.9,355.6) rotate(-90)" font-size="10" text-anchor="end" fill="#111">15:00</text><circle cx="489" cy="265.6" r="5.8" fill="#ff0000"/><text x="498" y="269.40000000000003" font-size="10.4" fill="#111" letter-spacing="0.07">Total: avg - 15m: 3.9GB</text><circle cx="489" cy="278.6" r="5.8" fill="#4682b4"/><text x="498" y="282.40000000000003" font-size="10.4" fill="#111" letter-spacing="0.07">Cached: avg - 15m: 1.3GB</text><circle cx="489" cy="291.6" r="5.8" fill="#ffa500"/><text x="498" y="295.40000000000003" font-size="10.4" fill="#111" letter-spacing="0.07">Active: avg - 15m: 1.1GB</text><circle cx="489" cy="304.6" r="5.8" fill="#228b22"/><text x="498" y="308.40000000000003" font-size="10.4" fill="#111" letter-spacing="0.07">Inactive: avg - 15m: 1.2GB</text><circle cx="489" cy="317.6" r="5.8" fill="#8a2be2"/><text x="498" y="321.40000000000003" font-size="10.4" fill="#111" letter-spacing="0.07">Buffers: avg - 15m: 35.1MB</text><circle cx="489" cy="330.6" r="5.8" fill="#800000"/><text x="498" y="334.40000000000003" font-size="10.4" fill="#111" letter-spacing="0.07">Free: avg - 15m: 413.1MB</text><circle cx="489" cy="343.6" r="5.8" fill="#9acd32"/><text x="498" y="347.40000000000003" font-size="10.4" fill="#111" letter-spacing="0.07">Used: avg - 15m: 3.5GB</text></svg>
<svg style="left:637px;top:222px" width="320" height="167" viewBox="637 222 320 167"><circle cx="657.7" cy="232" r="5.8" fill="#ff0000"/><text x="666.7" y="235.8" font-size="10.4" fill="#111" letter-spacing="0.07">Total: 1,022MB</text><circle cx="750.5" cy="232" r="5.8" fill="#4682b4"/><text x="759.5" y="235.8" font-size="10.4" fill="#111" letter-spacing="0.07">Used: 181.7MB</text><circle cx="842.7" cy="232" r="5.8" fill="#ffa500"/><text x="851.7" y="235.8" font-size="10.4" fill="#111" letter-spacing="0.07">Cached: 29.5MB</text><line x1="679.5" y1="347.0" x2="938.5" y2="347.0" stroke="#cfcfcf" stroke-width="1"/><line x1="679.5" y1="321.875" x2="938.5" y2="321.875" stroke="#cfcfcf" stroke-width="1"/><line x1="679.5" y1="296.75" x2="938.5" y2="296.75" stroke="#cfcfcf" stroke-width="1"/><line x1="679.5" y1="271.625" x2="938.5" y2="271.625" stroke="#cfcfcf" stroke-width="1"/><line x1="679.5" y1="246.5" x2="938.5" y2="246.5" stroke="#cfcfcf" stroke-width="1"/><line x1="701.5" y1="246.5" x2="701.5" y2="347" stroke="#cfcfcf" stroke-width="1"/><line x1="733.5" y1="246.5" x2="733.5" y2="347" stroke="#cfcfcf" stroke-width="1"/><line x1="765.5" y1="246.5" x2="765.5" y2="347" stroke="#cfcfcf" stroke-width="1"/><line x1="798.5" y1="246.5" x2="798.5" y2="347" stroke="#cfcfcf" stroke-width="1"/><line x1="830.5" y1="246.5" x2="830.5" y2="347" stroke="#cfcfcf" stroke-width="1"/><line x1="863.5" y1="246.5" x2="863.5" y2="347" stroke="#cfcfcf" stroke-width="1"/><line x1="895.5" y1="246.5" x2="895.5" y2="347" stroke="#cfcfcf" stroke-width="1"/><line x1="927.5" y1="246.5" x2="927.5" y2="347" stroke="#cfcfcf" stroke-width="1"/><line x1="679.5" y1="246.8" x2="937" y2="246.8" stroke="#ff0000" stroke-width="1.4"/><path d="M679.5,332 L695,332 L695,331.2 L701,331.2 L701,330.6 L830,330.6 L830,330.6 L832,330.6 L832,332.5 L880,332.5 L880,332.5 L882,332.5 L882,333 L884,333 L884,332.5 L906,332.5 L906,332.5 L907,332.5 L907,333 L912,333 L912,333 L914,333 L914,332.5 L930,332.5 L930,332.5 L934,332.5 L934,331 L937,331 L937,330" fill="none" stroke="#4682b4" stroke-width="1.2"/><path d="M679.5,344.2 L714,344.2 L714,342.4 L757,342.4 L757,341.8 L880,341.8 L880,342.8 L906,342.8 L906,343.2 L937,343.2 L937,343.5" fill="none" stroke="#ffa500" stroke-width="1.2"/><circle cx="937" cy="246.8" r="2.6" fill="none" stroke="#ff0000" stroke-width="1.3"/><circle cx="937" cy="330" r="2.6" fill="none" stroke="#4682b4" stroke-width="1.3"/><circle cx="937" cy="343.5" r="2.6" fill="none" stroke="#ffa500" stroke-width="1.3"/><line x1="679.5" y1="246.5" x2="942.5" y2="246.5" stroke="#333333" stroke-width="1.2"/><line x1="938.5" y1="246.5" x2="938.5" y2="347" stroke="#333333" stroke-width="1.2"/><line x1="938.5" y1="347" x2="942.5" y2="347" stroke="#333333" stroke-width="1.2"/><line x1="679.5" y1="347" x2="938.5" y2="347" stroke="#333333" stroke-width="1.2"/><line x1="679.5" y1="246.5" x2="679.5" y2="347" stroke="#333333" stroke-width="1"/><line x1="675.5" y1="347.0" x2="679.5" y2="347.0" stroke="#333333" stroke-width="1.2"/><text x="672.5" y="351.1" font-size="10" text-anchor="end" fill="#111">0</text><line x1="675.5" y1="321.875" x2="679.5" y2="321.875" stroke="#333333" stroke-width="1.2"/><text x="672.5" y="325.975" font-size="10" text-anchor="end" fill="#111">256MB</text><line x1="675.5" y1="296.75" x2="679.5" y2="296.75" stroke="#333333" stroke-width="1.2"/><text x="672.5" y="300.85" font-size="10" text-anchor="end" fill="#111">512MB</text><line x1="675.5" y1="271.625" x2="679.5" y2="271.625" stroke="#333333" stroke-width="1.2"/><text x="672.5" y="275.725" font-size="10" text-anchor="end" fill="#111">768MB</text><line x1="675.5" y1="246.5" x2="679.5" y2="246.5" stroke="#333333" stroke-width="1.2"/><text x="672.5" y="250.6" font-size="10" text-anchor="end" fill="#111">1GB</text><line x1="679.5" y1="347" x2="679.5" y2="352" stroke="#333333" stroke-width="1.2"/><line x1="701.5" y1="347" x2="701.5" y2="352" stroke="#333333" stroke-width="1.2"/><line x1="733.5" y1="347" x2="733.5" y2="352" stroke="#333333" stroke-width="1.2"/><line x1="765.5" y1="347" x2="765.5" y2="352" stroke="#333333" stroke-width="1.2"/><line x1="798.5" y1="347" x2="798.5" y2="352" stroke="#333333" stroke-width="1.2"/><line x1="830.5" y1="347" x2="830.5" y2="352" stroke="#333333" stroke-width="1.2"/><line x1="863.5" y1="347" x2="863.5" y2="352" stroke="#333333" stroke-width="1.2"/><line x1="895.5" y1="347" x2="895.5" y2="352" stroke="#333333" stroke-width="1.2"/><line x1="927.5" y1="347" x2="927.5" y2="352" stroke="#333333" stroke-width="1.2"/><line x1="938.5" y1="347" x2="938.5" y2="352" stroke="#333333" stroke-width="1.2"/><text transform="translate(704.9,354.6) rotate(-90)" font-size="10" text-anchor="end" fill="#111">18:00</text><text transform="translate(736.9,354.6) rotate(-90)" font-size="10" text-anchor="end" fill="#111">21:00</text><text transform="translate(768.9,354.6) rotate(-90)" font-size="10" text-anchor="end" fill="#111">Thu 24</text><text transform="translate(801.9,354.6) rotate(-90)" font-size="10" text-anchor="end" fill="#111">03:00</text><text transform="translate(833.9,354.6) rotate(-90)" font-size="10" text-anchor="end" fill="#111">06:00</text><text transform="translate(866.9,354.6) rotate(-90)" font-size="10" text-anchor="end" fill="#111">09:00</text><text transform="translate(898.9,354.6) rotate(-90)" font-size="10" text-anchor="end" fill="#111">12:00</text><text transform="translate(930.9,354.6) rotate(-90)" font-size="10" text-anchor="end" fill="#111">15:00</text><line x1="679.5" y1="246.5" x2="937" y2="246.5" stroke="#ff0000" stroke-width="1.2"/></svg>
<svg style="left:637px;top:419px" width="320" height="167" viewBox="637 419 320 167"><circle cx="710" cy="429" r="5.8" fill="#4682b4"/><text x="719" y="432.8" font-size="10.4" fill="#111" letter-spacing="0.07">[eth0] rx: 2.2kB</text><circle cx="800" cy="429" r="5.8" fill="#ffa500"/><text x="809" y="432.8" font-size="10.4" fill="#111" letter-spacing="0.07">[eth0] tx: 2.1kB</text><line x1="673.5" y1="544.5" x2="938.5" y2="544.5" stroke="#cfcfcf" stroke-width="1"/><line x1="673.5" y1="519.25" x2="938.5" y2="519.25" stroke="#cfcfcf" stroke-width="1"/><line x1="673.5" y1="494.0" x2="938.5" y2="494.0" stroke="#cfcfcf" stroke-width="1"/><line x1="673.5" y1="468.75" x2="938.5" y2="468.75" stroke="#cfcfcf" stroke-width="1"/><line x1="673.5" y1="443.5" x2="938.5" y2="443.5" stroke="#cfcfcf" stroke-width="1"/><line x1="695.5" y1="443.5" x2="695.5" y2="544.5" stroke="#cfcfcf" stroke-width="1"/><line x1="728.5" y1="443.5" x2="728.5" y2="544.5" stroke="#cfcfcf" stroke-width="1"/><line x1="761.5" y1="443.5" x2="761.5" y2="544.5" stroke="#cfcfcf" stroke-width="1"/><line x1="795.5" y1="443.5" x2="795.5" y2="544.5" stroke="#cfcfcf" stroke-width="1"/><line x1="828.5" y1="443.5" x2="828.5" y2="544.5" stroke="#cfcfcf" stroke-width="1"/><line x1="861.5" y1="443.5" x2="861.5" y2="544.5" stroke="#cfcfcf" stroke-width="1"/><line x1="894.5" y1="443.5" x2="894.5" y2="544.5" stroke="#cfcfcf" stroke-width="1"/><line x1="927.5" y1="443.5" x2="927.5" y2="544.5" stroke="#cfcfcf" stroke-width="1"/><path d="M673.5,544.5 L673.3000000000001,544.5 L673.86,493.9 L674.34,493.9 L674.9,544.5 L686.5,544.5 L687.06,529.2 L687.54,529.2 L688.0999999999999,544.5 L687.5,544.5 L688.13,473.1 L688.67,473.1 L689.3,544.5 L690.6,544.5 L691.16,521.4 L691.64,521.4 L692.1999999999999,544.5 L692.5,544.5 L693.13,469.4 L693.67,469.4 L694.3,544.5 L696.6,544.5 L697.23,489.3 L697.77,489.3 L698.4,544.5 L732.6,544.5 L733.3000000000001,529.6 L733.9,529.6 L734.6,544.5 L748.3000000000001,544.5 L748.9300000000001,532 L749.47,532 L750.1,544.5 L750.4,544.5 L751.1,529.2 L751.6999999999999,529.2 L752.4,544.5 L809.4000000000001,544.5 L809.96,540.4 L810.44,540.4 L811.0,544.5 L836.5999999999999,544.5 L837.4399999999999,537 L838.16,537 L839.0,544.5 L841.4,544.5 L842.1,536.3 L842.6999999999999,536.3 L843.4,544.5 L845.2,544.5 L845.76,540 L846.24,540 L846.8,544.5 L880.5,544.5 L881.13,470.7 L881.67,470.7 L882.3,544.5 L889.6,544.5 L890.23,530.1 L890.77,530.1 L891.4,544.5 L893.9,544.5 L894.67,529.8 L895.33,529.8 L896.1,544.5 L898.5,544.5 L899.13,534.4 L899.67,534.4 L900.3,544.5 L910.6,544.5 L911.3000000000001,530 L911.9,530 L912.6,544.5 L912.5,544.5 L913.13,473.1 L913.67,473.1 L914.3,544.5 L924.6,544.5 L925.23,469.4 L925.77,469.4 L926.4,544.5 L931.8,544.5 L932.64,506 L933.36,506 L934.2,544.5 L934.2,544.5 L934.83,470.7 L935.37,470.7 L936.0,544.5 L935.7,544.5 L936.33,474.4 L936.87,474.4 L937.5,544.5 L937.5,544.5 L937.5,545.5 L673.5,545.5 Z" fill="#ffa500" stroke="#ffa500" stroke-width="0.8"/><line x1="673.5" y1="443.5" x2="942.5" y2="443.5" stroke="#333333" stroke-width="1.2"/><line x1="938.5" y1="443.5" x2="938.5" y2="544.5" stroke="#333333" stroke-width="1.2"/><line x1="938.5" y1="544.5" x2="942.5" y2="544.5" stroke="#333333" stroke-width="1.2"/><line x1="673.5" y1="544.5" x2="938.5" y2="544.5" stroke="#333333" stroke-width="1.2"/><line x1="673.5" y1="443.5" x2="673.5" y2="544.5" stroke="#333333" stroke-width="1"/><line x1="669.5" y1="544.5" x2="673.5" y2="544.5" stroke="#333333" stroke-width="1.2"/><text x="666.5" y="548.6" font-size="10" text-anchor="end" fill="#111">0</text><line x1="669.5" y1="519.25" x2="673.5" y2="519.25" stroke="#333333" stroke-width="1.2"/><text x="666.5" y="523.35" font-size="10" text-anchor="end" fill="#111">4MB</text><line x1="669.5" y1="494.0" x2="673.5" y2="494.0" stroke="#333333" stroke-width="1.2"/><text x="666.5" y="498.1" font-size="10" text-anchor="end" fill="#111">8MB</text><line x1="669.5" y1="468.75" x2="673.5" y2="468.75" stroke="#333333" stroke-width="1.2"/><text x="666.5" y="472.85" font-size="10" text-anchor="end" fill="#111">12MB</text><line x1="669.5" y1="443.5" x2="673.5" y2="443.5" stroke="#333333" stroke-width="1.2"/><text x="666.5" y="447.6" font-size="10" text-anchor="end" fill="#111">16MB</text><line x1="673.5" y1="544.5" x2="673.5" y2="549.5" stroke="#333333" stroke-width="1.2"/><line x1="695.5" y1="544.5" x2="695.5" y2="549.5" stroke="#333333" stroke-width="1.2"/><line x1="728.5" y1="544.5" x2="728.5" y2="549.5" stroke="#333333" stroke-width="1.2"/><line x1="761.5" y1="544.5" x2="761.5" y2="549.5" stroke="#333333" stroke-width="1.2"/><line x1="795.5" y1="544.5" x2="795.5" y2="549.5" stroke="#333333" stroke-width="1.2"/><line x1="828.5" y1="544.5" x2="828.5" y2="549.5" stroke="#333333" stroke-width="1.2"/><line x1="861.5" y1="544.5" x2="861.5" y2="549.5" stroke="#333333" stroke-width="1.2"/><line x1="894.5" y1="544.5" x2="894.5" y2="549.5" stroke="#333333" stroke-width="1.2"/><line x1="927.5" y1="544.5" x2="927.5" y2="549.5" stroke="#333333" stroke-width="1.2"/><line x1="938.5" y1="544.5" x2="938.5" y2="549.5" stroke="#333333" stroke-width="1.2"/><text transform="translate(698.9,552.6) rotate(-90)" font-size="10" text-anchor="end" fill="#111">18:00</text><text transform="translate(732.0699999999999,552.6) rotate(-90)" font-size="10" text-anchor="end" fill="#111">21:00</text><text transform="translate(765.24,552.6) rotate(-90)" font-size="10" text-anchor="end" fill="#111">Thu 24</text><text transform="translate(798.41,552.6) rotate(-90)" font-size="10" text-anchor="end" fill="#111">03:00</text><text transform="translate(831.58,552.6) rotate(-90)" font-size="10" text-anchor="end" fill="#111">06:00</text><text transform="translate(864.75,552.6) rotate(-90)" font-size="10" text-anchor="end" fill="#111">09:00</text><text transform="translate(897.92,552.6) rotate(-90)" font-size="10" text-anchor="end" fill="#111">12:00</text><text transform="translate(931.09,552.6) rotate(-90)" font-size="10" text-anchor="end" fill="#111">15:00</text></svg>
<div style="position:absolute;left:5px;top:420px;width:148px;font-size:11px;color:#111"><div style="position:absolute;left:0;top:0px;width:148px;height:21.3px;background:#fff;border-top:1px solid #d6d6d6;border-bottom:1px solid #d6d6d6;border-left:1px solid #d6d6d6;border-right:1px solid #d6d6d6;box-sizing:border-box"><span style="position:absolute;left:5px;top:0px;line-height:21.3px;font-weight:700;font-size:11.440000000000001px">Metric</span><span style="position:absolute;right:4.2px;top:0px;line-height:21.3px;font-weight:700;font-size:11.0px">Value</span><div style="position:absolute;left:75px;top:0;width:1px;height:21.3px;background:#d6d6d6"></div></div><div style="position:absolute;left:0;top:21.3px;width:148px;height:20.8px;background:#f1f1f1;border-bottom:1px solid #d6d6d6;border-left:1px solid #d6d6d6;border-right:1px solid #d6d6d6;box-sizing:border-box"><span style="position:absolute;left:5px;top:0px;line-height:20.8px;font-weight:400;font-size:10.559999999999999px">runnable</span><span style="position:absolute;right:4.2px;top:0px;line-height:20.8px;font-weight:400;font-size:10.559999999999999px">1</span><div style="position:absolute;left:75px;top:0;width:1px;height:20.8px;background:#d6d6d6"></div></div><div style="position:absolute;left:0;top:42.1px;width:148px;height:20.8px;background:#fff;border-bottom:1px solid #d6d6d6;border-left:1px solid #d6d6d6;border-right:1px solid #d6d6d6;box-sizing:border-box"><span style="position:absolute;left:5px;top:0px;line-height:20.8px;font-weight:400;font-size:10.559999999999999px">blocked</span><span style="position:absolute;right:4.2px;top:0px;line-height:20.8px;font-weight:400;font-size:10.559999999999999px">0</span><div style="position:absolute;left:75px;top:0;width:1px;height:20.8px;background:#d6d6d6"></div></div><div style="position:absolute;left:0;top:62.900000000000006px;width:148px;height:20.8px;background:#f1f1f1;border-bottom:1px solid #d6d6d6;border-left:1px solid #d6d6d6;border-right:1px solid #d6d6d6;box-sizing:border-box"><span style="position:absolute;left:5px;top:0px;line-height:20.8px;font-weight:400;font-size:10.559999999999999px">fork</span><span style="position:absolute;right:4.2px;top:0px;line-height:20.8px;font-weight:400;font-size:10.559999999999999px">4.1</span><div style="position:absolute;left:75px;top:0;width:1px;height:20.8px;background:#d6d6d6"></div></div><div style="position:absolute;left:0;top:83.7px;width:148px;height:20.8px;background:#fff;border-bottom:1px solid #d6d6d6;border-left:1px solid #d6d6d6;border-right:1px solid #d6d6d6;box-sizing:border-box"><span style="position:absolute;left:5px;top:0px;line-height:20.8px;font-weight:400;font-size:10.559999999999999px">pswitch</span><span style="position:absolute;right:4.2px;top:0px;line-height:20.8px;font-weight:400;font-size:10.559999999999999px">477</span><div style="position:absolute;left:75px;top:0;width:1px;height:20.8px;background:#d6d6d6"></div></div></div>
<div style="position:absolute;left:163px;top:420px;width:148px;font-size:9.5px;color:#111"><div style="position:absolute;left:0;top:0px;width:148px;height:15.4px;background:#fff;border-top:1px solid #d6d6d6;border-bottom:1px solid #d6d6d6;border-left:1px solid #d6d6d6;border-right:1px solid #d6d6d6;box-sizing:border-box"><span style="position:absolute;left:3px;top:0.5px;line-height:15.4px;font-weight:700;font-size:9.88px">Metric</span><span style="position:absolute;right:2.5px;top:0.5px;line-height:15.4px;font-weight:700;font-size:9.5px">Disk Busy, %</span><div style="position:absolute;left:57px;top:0;width:1px;height:15.4px;background:#d6d6d6"></div></div><span style="position:absolute;left:66px;top:0.5px;line-height:15.4px;font-size:8.5px">&#9660;</span><div style="position:absolute;left:0;top:15.4px;width:148px;height:14.9px;background:#f1f1f1;border-bottom:1px solid #d6d6d6;border-left:1px solid #d6d6d6;border-right:1px solid #d6d6d6;box-sizing:border-box"><span style="position:absolute;left:3px;top:0.5px;line-height:14.9px;font-weight:400;font-size:9.12px">sda</span><span style="position:absolute;right:2.5px;top:0.5px;line-height:14.9px;font-weight:400;font-size:9.12px">0.5</span><div style="position:absolute;left:57px;top:0;width:1px;height:14.9px;background:#d6d6d6"></div></div><div style="position:absolute;left:0;top:30.3px;width:148px;height:14.9px;background:#fff;border-bottom:1px solid #d6d6d6;border-left:1px solid #d6d6d6;border-right:1px solid #d6d6d6;box-sizing:border-box"><span style="position:absolute;left:3px;top:0.5px;line-height:14.9px;font-weight:400;font-size:9.12px">sda1</span><span style="position:absolute;right:2.5px;top:0.5px;line-height:14.9px;font-weight:400;font-size:9.12px">0.3</span><div style="position:absolute;left:57px;top:0;width:1px;height:14.9px;background:#d6d6d6"></div></div><div style="position:absolute;left:0;top:45.2px;width:148px;height:14.9px;background:#f1f1f1;border-bottom:1px solid #d6d6d6;border-left:1px solid #d6d6d6;border-right:1px solid #d6d6d6;box-sizing:border-box"><span style="position:absolute;left:3px;top:0.5px;line-height:14.9px;font-weight:400;font-size:9.12px">sda5</span><span style="position:absolute;right:2.5px;top:0.5px;line-height:14.9px;font-weight:400;font-size:9.12px">0.2</span><div style="position:absolute;left:57px;top:0;width:1px;height:14.9px;background:#d6d6d6"></div></div><div style="position:absolute;left:0;top:60.1px;width:148px;height:14.9px;background:#fff;border-bottom:1px solid #d6d6d6;border-left:1px solid #d6d6d6;border-right:1px solid #d6d6d6;box-sizing:border-box"><span style="position:absolute;left:3px;top:0.5px;line-height:14.9px;font-weight:400;font-size:9.12px">sdb</span><span style="position:absolute;right:2.5px;top:0.5px;line-height:14.9px;font-weight:400;font-size:9.12px">0.2</span><div style="position:absolute;left:57px;top:0;width:1px;height:14.9px;background:#d6d6d6"></div></div><div style="position:absolute;left:0;top:75.0px;width:148px;height:14.9px;background:#f1f1f1;border-bottom:1px solid #d6d6d6;border-left:1px solid #d6d6d6;border-right:1px solid #d6d6d6;box-sizing:border-box"><span style="position:absolute;left:3px;top:0.5px;line-height:14.9px;font-weight:400;font-size:9.12px">sdb1</span><span style="position:absolute;right:2.5px;top:0.5px;line-height:14.9px;font-weight:400;font-size:9.12px">0.2</span><div style="position:absolute;left:57px;top:0;width:1px;height:14.9px;background:#d6d6d6"></div></div><div style="position:absolute;left:0;top:89.9px;width:148px;height:14.9px;background:#fff;border-bottom:1px solid #d6d6d6;border-left:1px solid #d6d6d6;border-right:1px solid #d6d6d6;box-sizing:border-box"><span style="position:absolute;left:3px;top:0.5px;line-height:14.9px;font-weight:400;font-size:9.12px">sda2</span><span style="position:absolute;right:2.5px;top:0.5px;line-height:14.9px;font-weight:400;font-size:9.12px">0</span><div style="position:absolute;left:57px;top:0;width:1px;height:14.9px;background:#d6d6d6"></div></div></div>
<div style="position:absolute;left:321px;top:420px;width:306px;font-size:11px;color:#111"><div style="position:absolute;left:0;top:0px;width:306px;height:21.3px;background:#fff;border-top:1px solid #d6d6d6;border-bottom:1px solid #d6d6d6;border-left:1px solid #d6d6d6;border-right:1px solid #d6d6d6;box-sizing:border-box"><span style="position:absolute;left:5.5px;top:0px;line-height:21.3px;font-weight:700;font-size:11.440000000000001px">Metric</span><span style="position:absolute;right:4.2px;top:0px;line-height:21.3px;font-weight:700;font-size:11.0px">Space Used, %</span><div style="position:absolute;left:164px;top:0;width:1px;height:21.3px;background:#d6d6d6"></div></div><span style="position:absolute;left:200.5px;top:0px;line-height:21.3px;font-size:10px">&#9660;</span><div style="position:absolute;left:0;top:21.3px;width:306px;height:20.8px;background:#f1f1f1;border-bottom:1px solid #d6d6d6;border-left:1px solid #d6d6d6;border-right:1px solid #d6d6d6;box-sizing:border-box"><span style="position:absolute;left:5.5px;top:0px;line-height:20.8px;font-weight:400;font-size:10.559999999999999px">/</span><span style="position:absolute;right:4.2px;top:0px;line-height:20.8px;font-weight:400;font-size:10.559999999999999px">73</span><div style="position:absolute;left:164px;top:0;width:1px;height:20.8px;background:#d6d6d6"></div></div><div style="position:absolute;left:0;top:42.1px;width:306px;height:20.8px;background:#fff;border-bottom:1px solid #d6d6d6;border-left:1px solid #d6d6d6;border-right:1px solid #d6d6d6;box-sizing:border-box"><span style="position:absolute;left:5.5px;top:0px;line-height:20.8px;font-weight:400;font-size:10.559999999999999px">/app</span><span style="position:absolute;right:4.2px;top:0px;line-height:20.8px;font-weight:400;font-size:10.559999999999999px">72</span><div style="position:absolute;left:164px;top:0;width:1px;height:20.8px;background:#d6d6d6"></div></div><div style="position:absolute;left:0;top:62.900000000000006px;width:306px;height:20.8px;background:#f1f1f1;border-bottom:1px solid #d6d6d6;border-left:1px solid #d6d6d6;border-right:1px solid #d6d6d6;box-sizing:border-box"><span style="position:absolute;left:5.5px;top:0px;line-height:20.8px;font-weight:400;font-size:10.559999999999999px">/mnt/u113452</span><span style="position:absolute;right:4.2px;top:0px;line-height:20.8px;font-weight:400;font-size:10.559999999999999px">39</span><div style="position:absolute;left:164px;top:0;width:1px;height:20.8px;background:#d6d6d6"></div></div><div style="position:absolute;left:0;top:83.7px;width:306px;height:20.8px;background:#fff;border-bottom:1px solid #d6d6d6;border-left:1px solid #d6d6d6;border-right:1px solid #d6d6d6;box-sizing:border-box"><span style="position:absolute;left:5.5px;top:0px;line-height:20.8px;font-weight:400;font-size:10.559999999999999px">/mnt/u113452/jenkins_data</span><span style="position:absolute;right:4.2px;top:0px;line-height:20.8px;font-weight:400;font-size:10.559999999999999px">39</span><div style="position:absolute;left:164px;top:0;width:1px;height:20.8px;background:#d6d6d6"></div></div><div style="position:absolute;left:0;top:104.5px;width:306px;height:20.8px;background:#f1f1f1;border-bottom:1px solid #d6d6d6;border-left:1px solid #d6d6d6;border-right:1px solid #d6d6d6;box-sizing:border-box"><span style="position:absolute;left:5.5px;top:0px;line-height:20.8px;font-weight:400;font-size:10.559999999999999px">/run/user</span><span style="position:absolute;right:4.2px;top:0px;line-height:20.8px;font-weight:400;font-size:10.559999999999999px">0</span><div style="position:absolute;left:164px;top:0;width:1px;height:20.8px;background:#d6d6d6"></div></div></div>
<svg style="left:300px;top:90px" width="50" height="35" viewBox="300 90 50 35"><path d="M307,108 L314.5,98 L344,98 L344,118 L314.5,118 Z" fill="#4682b4"/><text x="329" y="112.5" font-size="12.5" text-anchor="middle" fill="#fff">35</text></svg>
<svg style="left:300px;top:250px" width="60" height="100" viewBox="300 250 60 100"><path d="M307.2,267.7 L313.6,258 L344,258 L344,277.5 L313.6,277.5 Z" fill="#4682b4"/><text x="329" y="272.5" font-size="13" text-anchor="middle" fill="#fff">90</text><path d="M307.2,330.7 L313.6,321 L353.8,321 L353.8,340.7 L313.6,340.7 Z" fill="#ffa500"/><text x="334" y="335.5" font-size="13" text-anchor="middle" fill="#fff">17.7</text></svg>
<div class="bot"></div>
</body></html>
